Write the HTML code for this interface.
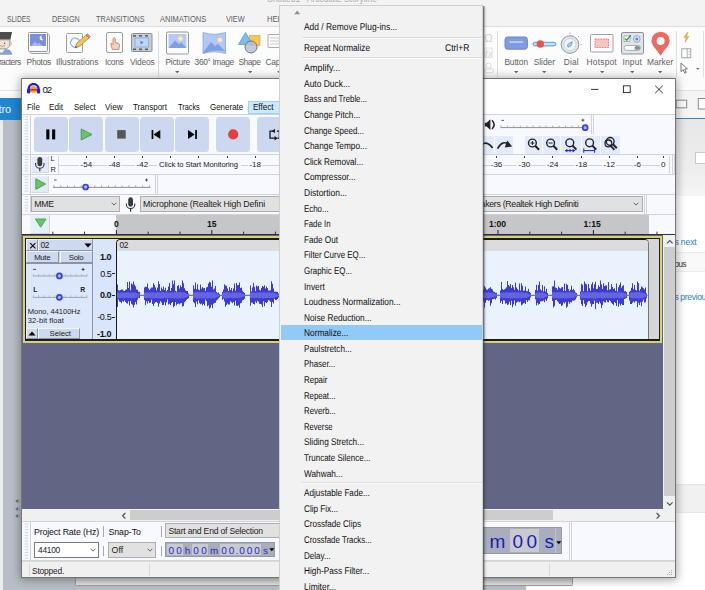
<!DOCTYPE html>
<html><head><meta charset="utf-8"><title>Audacity - Effect menu</title>
<style>
html,body{margin:0;padding:0;background:#fff;}
#root{position:relative;width:705px;height:590px;overflow:hidden;background:#fff;font-family:"Liberation Sans",sans-serif;}
#root div,#root span.t,#root svg{position:absolute;}
#root div{box-sizing:border-box;}
span.t{white-space:nowrap;line-height:12px;display:block;}
</style></head><body><div id="root">
<div style="left:0.00px;top:0.00px;width:705.00px;height:26.00px;background:#f3f3f4;"></div>
<div style="left:0.00px;top:26.00px;width:705.00px;height:65.00px;background:#fcfcfc;border-top:1px solid #dcdcdc;border-bottom:1px solid #e2e2e2;"></div>
<span class="t " style="left:267.00px;top:-7.10px;font-size:9.2px;color:#adadad;transform:scaleX(0.9110);transform-origin:0 50%;">Untitled1  -  Articulate Storyline</span>
<span class="t " style="left:7.40px;top:13.10px;font-size:9.4px;color:#5e5e5e;transform:scaleX(0.7058);transform-origin:0 50%;">SLIDES</span>
<span class="t " style="left:51.60px;top:13.10px;font-size:9.4px;color:#5e5e5e;transform:scaleX(0.7714);transform-origin:0 50%;">DESIGN</span>
<span class="t " style="left:96.00px;top:13.10px;font-size:9.4px;color:#5e5e5e;transform:scaleX(0.7722);transform-origin:0 50%;">TRANSITIONS</span>
<span class="t " style="left:160.00px;top:13.10px;font-size:9.4px;color:#5e5e5e;transform:scaleX(0.8028);transform-origin:0 50%;">ANIMATIONS</span>
<span class="t " style="left:226.00px;top:13.10px;font-size:9.4px;color:#5e5e5e;transform:scaleX(0.7742);transform-origin:0 50%;">VIEW</span>
<span class="t " style="left:266.60px;top:13.10px;font-size:9.4px;color:#5e5e5e;transform:scaleX(0.8104);transform-origin:0 50%;">HELP</span>
<span class="t " style="left:-14.78px;top:55.70px;font-size:8.4px;color:#606060;letter-spacing:-0.570px;">Characters</span>
<span class="t " style="left:26.60px;top:55.70px;font-size:8.4px;color:#606060;letter-spacing:-0.292px;">Photos</span>
<span class="t " style="left:56.00px;top:55.70px;font-size:8.4px;color:#606060;letter-spacing:0.009px;">Illustrations</span>
<span class="t " style="left:105.00px;top:55.70px;font-size:8.4px;color:#606060;letter-spacing:-0.335px;">Icons</span>
<span class="t " style="left:130.00px;top:55.70px;font-size:8.4px;color:#606060;letter-spacing:-0.156px;">Videos</span>
<span class="t " style="left:165.40px;top:55.70px;font-size:8.4px;color:#606060;letter-spacing:-0.221px;">Picture</span>
<span class="t " style="left:194.60px;top:55.70px;font-size:8.4px;color:#606060;letter-spacing:-0.366px;">360° Image</span>
<span class="t " style="left:238.40px;top:55.70px;font-size:8.4px;color:#606060;letter-spacing:-0.418px;">Shape</span>
<span class="t " style="left:265.40px;top:55.70px;font-size:8.4px;color:#606060;letter-spacing:-0.193px;">Caption</span>
<span class="t " style="left:504.40px;top:55.70px;font-size:8.4px;color:#606060;letter-spacing:-0.114px;">Button</span>
<span class="t " style="left:533.70px;top:55.70px;font-size:8.4px;color:#606060;letter-spacing:-0.030px;">Slider</span>
<span class="t " style="left:563.70px;top:55.70px;font-size:8.4px;color:#606060;letter-spacing:0.157px;">Dial</span>
<span class="t " style="left:586.60px;top:55.70px;font-size:8.4px;color:#606060;letter-spacing:0.207px;">Hotspot</span>
<span class="t " style="left:622.50px;top:55.70px;font-size:8.4px;color:#606060;letter-spacing:0.163px;">Input</span>
<span class="t " style="left:647.00px;top:55.70px;font-size:8.4px;color:#606060;letter-spacing:0.044px;">Marker</span>
<div style="left:158.10px;top:31.00px;width:1.00px;height:46.00px;background:#dedede;"></div>
<div style="left:496.50px;top:31.00px;width:1.00px;height:46.00px;background:#dedede;"></div>
<div style="left:676.10px;top:31.00px;width:1.00px;height:46.00px;background:#dedede;"></div>
<div style="left:702.90px;top:31.00px;width:1.00px;height:46.00px;background:#dedede;"></div>
<svg style="left:175.20px;top:71.30px;" width="4.4" height="2.6" viewBox="0 0 4.4 2.6"><path d="M0 0 L4.4 0 L2.2 2.2 Z" fill="#666"/></svg>
<svg style="left:247.80px;top:71.30px;" width="4.4" height="2.6" viewBox="0 0 4.4 2.6"><path d="M0 0 L4.4 0 L2.2 2.2 Z" fill="#666"/></svg>
<svg style="left:276.80px;top:71.30px;" width="4.4" height="2.6" viewBox="0 0 4.4 2.6"><path d="M0 0 L4.4 0 L2.2 2.2 Z" fill="#666"/></svg>
<svg style="left:514.20px;top:71.30px;" width="4.4" height="2.6" viewBox="0 0 4.4 2.6"><path d="M0 0 L4.4 0 L2.2 2.2 Z" fill="#666"/></svg>
<svg style="left:542.30px;top:71.30px;" width="4.4" height="2.6" viewBox="0 0 4.4 2.6"><path d="M0 0 L4.4 0 L2.2 2.2 Z" fill="#666"/></svg>
<svg style="left:567.80px;top:71.30px;" width="4.4" height="2.6" viewBox="0 0 4.4 2.6"><path d="M0 0 L4.4 0 L2.2 2.2 Z" fill="#666"/></svg>
<svg style="left:599.80px;top:71.30px;" width="4.4" height="2.6" viewBox="0 0 4.4 2.6"><path d="M0 0 L4.4 0 L2.2 2.2 Z" fill="#666"/></svg>
<svg style="left:629.80px;top:71.30px;" width="4.4" height="2.6" viewBox="0 0 4.4 2.6"><path d="M0 0 L4.4 0 L2.2 2.2 Z" fill="#666"/></svg>
<svg style="left:658.40px;top:71.30px;" width="4.4" height="2.6" viewBox="0 0 4.4 2.6"><path d="M0 0 L4.4 0 L2.2 2.2 Z" fill="#666"/></svg>
<svg style="left:696.20px;top:68.10px;" width="3.6" height="2.2" viewBox="0 0 3.6 2.2"><path d="M0 0 L3.6 0 L1.8 1.8 Z" fill="#666"/></svg>
<svg style="left:0.00px;top:31.00px;" width="14" height="24" viewBox="0 0 14 24"><path d="M-6 1 L12 1 L10.4 8.8 L-6 8.8Z" fill="#4c4c4c"/><path d="M-6 8.8 H9.8 V13.4 Q9.8 17.8 4 17.8 H-6Z" fill="#f6e0d2" stroke="#8e8e8e" stroke-width="0.8"/><circle cx="4.6" cy="12.2" r="0.7" fill="#555"/><path d="M0 14.6 Q2.4 16.2 5 14.6" stroke="#9a7a6a" fill="none" stroke-width="0.7"/><ellipse cx="10.4" cy="12.6" rx="1" ry="1.5" fill="#f6e0d2" stroke="#8e8e8e" stroke-width="0.6"/><path d="M-6 18.6 H6 Q11.4 18.8 11.8 23.4 H-6Z" fill="#7fa3dc" stroke="#6a8cc8" stroke-width="0.6"/><path d="M-3 18.4 L1.4 22 L5 18.4Z" fill="#fdfdfd"/><path d="M-6 23.3H12" stroke="#a9b2bd" stroke-width="1.2"/></svg>
<svg style="left:27.00px;top:31.00px;" width="24" height="24" viewBox="0 0 24 24"><rect x="3.5" y="3.5" width="19" height="19" rx="1" fill="#f7f7f7" stroke="#9aa0a8" stroke-width="1"/><rect x="1.5" y="1.5" width="19" height="19" rx="1" fill="#fafafa" stroke="#8e959e" stroke-width="1"/><rect x="3" y="3" width="16" height="12" fill="#7a90dc"/><path d="M14.8 4.6 A2.4 2.4 0 1 0 16.6 8.8 A2.9 2.9 0 0 1 14.8 4.6Z" fill="#fdf2b8"/><path d="M4 15 L8 10.4 L10.4 13 L12 11.8 L15.4 15Z" fill="#a9b8ee"/></svg>
<svg style="left:65.00px;top:31.00px;" width="26" height="24" viewBox="0 0 26 24"><rect x="1.5" y="2.5" width="16" height="19" rx="1" fill="#fbfbfb" stroke="#9aa0a8" stroke-width="1"/><path d="M6 10 Q8 5 12 8 Q15 7 14 11 Q16 14 12 15 Q9 18 7 15 Q4 13 6 10Z" fill="#f4f7fe" stroke="#6f8fe0" stroke-width="0.9"/><path d="M10 17 L12 12 L21 4 L24 7 L15 15 Z" fill="#f6c453" stroke="#a08040" stroke-width="0.8"/><path d="M21 4 L22.5 2.7 L25.3 5.6 L24 7Z" fill="#e88a9a" stroke="#a06070" stroke-width="0.6"/><path d="M10 17 L10.8 14.8 L12.3 16.2Z" fill="#555"/></svg>
<svg style="left:105.00px;top:31.00px;" width="20" height="24" viewBox="0 0 20 24"><rect x="1.5" y="1.5" width="16" height="20" rx="1.5" fill="#fbfbfb" stroke="#9aa0a8" stroke-width="1"/><path d="M7.5 18.5 L6 14 Q5 12 7 12.5 L8 13.5 L8 7.5 Q9.2 6 10.3 7.5 L10.3 11.5 L13.5 12.3 Q15 13 14.5 15 L13.8 18.5Z" fill="#f6d0bc" stroke="#b08070" stroke-width="0.8"/></svg>
<svg style="left:130.00px;top:32.00px;" width="24" height="22" viewBox="0 0 24 22"><rect x="1.5" y="1.5" width="20.5" height="18" rx="1" fill="#c9ccd2" stroke="#8a9098" stroke-width="1"/><rect x="5" y="6" width="13.5" height="9" fill="#bcd6f6" stroke="#7fa6dc" stroke-width="0.8"/><path d="M10.5 8.6 L13.6 10.5 L10.5 12.4Z" fill="#5c86d0"/><g fill="#5a5f68"><rect x="3" y="3" width="3" height="1.6"/><rect x="9" y="3" width="3" height="1.6"/><rect x="15" y="3" width="3" height="1.6"/><rect x="3" y="16.5" width="3" height="1.6"/><rect x="9" y="16.5" width="3" height="1.6"/><rect x="15" y="16.5" width="3" height="1.6"/></g></svg>
<svg style="left:165.00px;top:31.00px;" width="26" height="24" viewBox="0 0 26 24"><rect x="1.5" y="1" width="22" height="22" rx="1.5" fill="#fbfbfb" stroke="#8e959e" stroke-width="1"/><rect x="3.5" y="3" width="18" height="14" fill="#b4ccf5"/><circle cx="15.5" cy="7.5" r="2.6" fill="#fde9d2" stroke="#f0b890" stroke-width="0.6"/><path d="M3.5 17 L10 9.5 L14 13 L16.5 11.5 L21.5 17Z" fill="#7f9fe4"/></svg>
<svg style="left:202.00px;top:31.00px;" width="25" height="24" viewBox="0 0 25 24"><path d="M1 1.5 Q12 5 23.5 1.5 L23.5 22.5 Q12 19 1 22.5Z" fill="#b0c9f4" stroke="#86a4e2" stroke-width="0.8"/><circle cx="18" cy="9" r="2.6" fill="#fde9d2" stroke="#f0b890" stroke-width="0.6"/><path d="M1 21.5 L9 11 L13 15 L16 13 L23.5 20.5 Q12 18 1 22.5Z" fill="#7f9fe4"/></svg>
<svg style="left:237.00px;top:31.00px;" width="26" height="24" viewBox="0 0 26 24"><rect x="12.5" y="4.5" width="10.5" height="10" fill="#f6c64e" stroke="#c8a040" stroke-width="0.6"/><path d="M1.5 13.5 L8.5 1.5 L15.5 13.5Z" fill="#7fbdea" stroke="#5a98cc" stroke-width="0.8"/><circle cx="14" cy="16" r="6" fill="#b8c0d0" fill-opacity="0.85" stroke="#6a7488" stroke-width="1"/></svg>
<svg style="left:267.00px;top:33.00px;" width="18" height="18" viewBox="0 0 18 18"><rect x="1" y="1.5" width="20" height="13" rx="1" fill="#fdfdfd" stroke="#a8a8a8" stroke-width="1"/><path d="M3 5H20M3 8H20M3 11H20" stroke="#c8c8c8" stroke-width="1"/></svg>
<span class="t " style="left:484.30px;top:31.60px;font-size:11.5px;color:#d2d2d2;">Ω</span>
<span class="t " style="left:485.31px;top:48.00px;font-size:9.5px;color:#d6d6d6;font-style:italic;">fx</span>
<svg style="left:484.00px;top:47.00px;" width="10" height="12" viewBox="0 0 10 12"><rect x="1" y="1" width="7" height="9.6" fill="none" stroke="#dcdcdc" stroke-width="0.8"/></svg>
<svg style="left:484.00px;top:62.00px;" width="11" height="12" viewBox="0 0 11 12"><circle cx="4.6" cy="3.6" r="2.6" fill="none" stroke="#d4d4d4" stroke-width="0.9"/><rect x="0.8" y="7" width="8.6" height="3.6" rx="1.6" fill="none" stroke="#d4d4d4" stroke-width="0.9"/></svg>
<svg style="left:503.00px;top:35.00px;" width="27" height="16" viewBox="0 0 27 16"><rect x="2" y="2" width="22.4" height="12.2" rx="2.5" fill="#7f9cdd" stroke="#6a86cc" stroke-width="1"/><rect x="6.2" y="6.1" width="14" height="1.9" rx="0.9" fill="#b6c8ef"/></svg>
<svg style="left:532.00px;top:38.00px;" width="26" height="12" viewBox="0 0 26 12"><rect x="1" y="4.3" width="23" height="3.6" rx="1.8" fill="#bfe0f8" stroke="#4f9fdc" stroke-width="1"/><circle cx="8.3" cy="6" r="3.7" fill="#e9524a"/></svg>
<svg style="left:558.00px;top:31.00px;" width="24" height="26" viewBox="0 0 24 26"><circle cx="12" cy="13.5" r="8.8" fill="#e3e7ea" stroke="#8c949c" stroke-width="1"/><circle cx="12" cy="13.5" r="6" fill="#f2f5f7" stroke="#b4bcc4" stroke-width="0.6"/><path d="M9.8 16 Q8.6 12.5 14.2 10.8 Q13.6 16.5 9.8 16Z" fill="#9fd0f4" stroke="#4f97d0" stroke-width="0.8"/><g fill="#888"><circle cx="12" cy="2.2" r="0.6"/><circle cx="20.5" cy="5.5" r="0.6"/><circle cx="23" cy="13.5" r="0.6"/></g></svg>
<svg style="left:589.00px;top:33.00px;" width="26" height="21" viewBox="0 0 26 21"><rect x="1.5" y="1.5" width="22.5" height="17.5" rx="1" fill="#fbfbfb" stroke="#9aa0a8" stroke-width="1"/><rect x="6" y="6" width="13.5" height="8.5" fill="#f9c4c0" stroke="#ea6a62" stroke-width="0.9" stroke-dasharray="1.6 1.1"/></svg>
<svg style="left:620.00px;top:31.00px;" width="25" height="25" viewBox="0 0 25 25"><rect x="1.5" y="1.5" width="22" height="21.5" rx="1.5" fill="#e2e5e8" stroke="#8a9098" stroke-width="1"/><rect x="4" y="5" width="6" height="5.5" fill="#fff" stroke="#8a9098" stroke-width="0.7"/><path d="M5 7.5 L6.8 9.3 L10.8 4.2" stroke="#3aa04a" stroke-width="1.4" fill="none"/><circle cx="16.8" cy="8" r="3.3" fill="#dfe9fa" stroke="#7a90c0" stroke-width="0.8"/><circle cx="16.8" cy="8" r="1.5" fill="#5c86d8"/><rect x="4" y="14.5" width="16.5" height="4.8" rx="2.4" fill="#fff" stroke="#8a9098" stroke-width="0.7"/><rect x="14.5" y="15" width="5.6" height="3.8" rx="1.9" fill="#8a9098"/></svg>
<svg style="left:650.00px;top:31.00px;" width="22" height="26" viewBox="0 0 22 26"><path d="M10.6 24.8 C6 17.5 1.5 14.6 1.5 9.8 A9.1 9.1 0 0 1 19.7 9.8 C19.7 14.6 15.2 17.5 10.6 24.8Z" fill="#ee6a60"/><circle cx="10.6" cy="10" r="4" fill="#fcfcfc"/></svg>
<svg style="left:682.00px;top:32.00px;" width="9" height="11" viewBox="0 0 9 11"><path d="M5.2 0.5 L1.8 5.6 L4.2 5.6 L3 10.3 L7 4.4 L4.6 4.4 L6 0.5Z" fill="#f0b840" stroke="#b89030" stroke-width="0.4"/></svg>
<svg style="left:680.50px;top:48.00px;" width="11" height="11" viewBox="0 0 11 11"><rect x="0.8" y="0.8" width="9" height="9" fill="#fdfdfd" stroke="#909090" stroke-width="0.8"/><path d="M6.2 0.8V9.8" stroke="#909090" stroke-width="0.7"/><path d="M8 3.5v0.8M8 6v0.8" stroke="#707070" stroke-width="0.8"/></svg>
<svg style="left:680.00px;top:62.00px;" width="9" height="13" viewBox="0 0 9 13"><path d="M1 1 L1 9.6 L3.2 7.6 L4.8 11.2 L6.3 10.5 L4.7 7 L7.4 6.9Z" fill="#fff" stroke="#555" stroke-width="0.8"/></svg>
<div style="left:0.00px;top:91.00px;width:22.00px;height:7.00px;background:linear-gradient(#fdfdfd,#f4f5f6);"></div>
<div style="left:0.00px;top:97.60px;width:22.00px;height:22.00px;background:#1f86d4;"></div>
<span class="t " style="left:-1.50px;top:102.60px;font-size:11px;color:#eaf4fc;letter-spacing:-0.112px;">tro</span>
<div style="left:0.00px;top:119.50px;width:22.00px;height:471.00px;background:#b7bec5;"></div>
<div style="left:0.00px;top:119.50px;width:3.00px;height:471.00px;background:#eceef0;"></div>
<svg style="left:15.20px;top:499.40px;" width="6" height="4" viewBox="0 0 6 4"><path d="M0.2 2 L3.2 0.1 L3.2 3.9Z" fill="#6c7076"/><path d="M4.3 0.7v0.8M4.3 2.5v0.8" stroke="#5f9ad0" stroke-width="0.9"/></svg>
<svg style="left:15.20px;top:506.60px;" width="6" height="4" viewBox="0 0 6 4"><path d="M0.2 2 L3.2 0.1 L3.2 3.9Z" fill="#6c7076"/><path d="M4.3 0.7v0.8M4.3 2.5v0.8" stroke="#5f9ad0" stroke-width="0.9"/></svg>
<svg style="left:15.20px;top:514.00px;" width="6" height="4" viewBox="0 0 6 4"><path d="M0.2 2 L3.2 0.1 L3.2 3.9Z" fill="#6c7076"/><path d="M4.3 0.7v0.8M4.3 2.5v0.8" stroke="#5f9ad0" stroke-width="0.9"/></svg>
<div style="left:676.00px;top:91.00px;width:29.00px;height:27.50px;background:#f5f5f5;"></div>
<svg style="left:675.00px;top:97.00px;" width="30" height="14" viewBox="0 0 30 14"><rect x="1.2" y="3.2" width="10.5" height="7.6" fill="#fbfbfb" stroke="#8c8c8c" stroke-width="1"/><rect x="23.3" y="1.5" width="10" height="10.5" fill="#fdfdfd" stroke="#8c8c8c" stroke-width="1"/></svg>
<div style="left:676.00px;top:117.80px;width:29.00px;height:1.60px;background:#2b88cf;"></div>
<div style="left:676.00px;top:119.40px;width:29.00px;height:77.00px;background:linear-gradient(#e7e7e7,#eeeeee 70%,#f6f6f6);"></div>
<div style="left:676.00px;top:176.50px;width:29.00px;height:1.00px;background:#f3f3f3;"></div>
<div style="left:695.30px;top:151.70px;width:12.00px;height:12.00px;background:#fff;border:1px solid #c9c9c9;"></div>
<div style="left:676.00px;top:196.00px;width:29.00px;height:394.00px;background:#fff;"></div>
<div style="left:676.00px;top:252.00px;width:29.00px;height:1.00px;background:#ececec;"></div>
<div style="left:676.00px;top:271.00px;width:29.00px;height:1.00px;background:#ececec;"></div>
<div style="left:676.00px;top:253.00px;width:29.00px;height:18.00px;background:#f9f9f9;"></div>
<span class="t " style="left:674.40px;top:236.20px;font-size:8.6px;color:#2d7fb4;letter-spacing:-0.124px;">s next</span>
<span class="t " style="left:674.20px;top:257.60px;font-size:8.6px;color:#3a3a3a;letter-spacing:-0.755px;">ous</span>
<span class="t " style="left:674.40px;top:291.40px;font-size:8.6px;color:#2d7fb4;letter-spacing:-0.360px;">s previous</span>
<div style="left:676.00px;top:484.00px;width:29.00px;height:29.00px;background:#f1f1f1;border-top:1px solid #e4e8ec;border-bottom:1px solid #e8e8e8;"></div>
<div style="left:22.00px;top:578.00px;width:504.00px;height:12.00px;background:#b7bec5;"></div>
<div style="left:75.00px;top:576.00px;width:498.40px;height:10.40px;background:linear-gradient(#bdbdbd,#d4d4d4 50%,#e6e6e6);border:1px solid #9c9c9c;border-top:none;border-radius:0 0 2px 2px;"></div>
<div style="left:20.90px;top:78.20px;width:654.90px;height:499.70px;background:#ffffff;border:1px solid #747474;box-shadow:0 1px 9px 1px rgba(0,0,0,0.34);"></div>
<svg style="left:26.50px;top:83.00px;" width="14" height="11" viewBox="0 0 14 11"><path d="M1.6 8.2 V6.4 A5 5.4 0 0 1 11.6 6.4 V8.2" fill="none" stroke="#1d1dd8" stroke-width="2.3"/><ellipse cx="6.6" cy="6.4" rx="3.6" ry="3.4" fill="#f6a21e"/><rect x="3.6" y="6" width="6" height="1.5" fill="#e02818"/><rect x="0" y="5.6" width="3.4" height="5" rx="1.5" fill="#1d1dd8"/><rect x="9.8" y="5.6" width="3.4" height="5" rx="1.5" fill="#1d1dd8"/></svg>
<span class="t " style="left:42.50px;top:83.60px;font-size:9.7px;color:#111;letter-spacing:-1.045px;">02</span>
<svg style="left:588.00px;top:83.00px;" width="80" height="13" viewBox="0 0 80 13"><path d="M3 6.4H10.6" stroke="#222" stroke-width="0.9"/><rect x="35.4" y="2.8" width="6.8" height="6.8" fill="none" stroke="#222" stroke-width="0.9"/><path d="M67.2 2.6 L74.8 10.2 M74.8 2.6 L67.2 10.2" stroke="#222" stroke-width="0.9"/></svg>
<div style="left:248.40px;top:101.00px;width:36.00px;height:12.80px;background:#cce8ff;border:1px solid #99d1ff;"></div>
<span class="t " style="left:26.80px;top:101.35px;font-size:9.0px;color:#111;transform:scaleX(0.8826);transform-origin:0 50%;">File</span>
<span class="t " style="left:49.30px;top:101.35px;font-size:9.0px;color:#111;transform:scaleX(0.9027);transform-origin:0 50%;">Edit</span>
<span class="t " style="left:73.50px;top:101.35px;font-size:9.0px;color:#111;transform:scaleX(0.8675);transform-origin:0 50%;">Select</span>
<span class="t " style="left:105.40px;top:101.35px;font-size:9.0px;color:#111;transform:scaleX(0.9098);transform-origin:0 50%;">View</span>
<span class="t " style="left:133.30px;top:101.35px;font-size:9.0px;color:#111;transform:scaleX(0.8905);transform-origin:0 50%;">Transport</span>
<span class="t " style="left:178.00px;top:101.35px;font-size:9.0px;color:#111;transform:scaleX(0.8175);transform-origin:0 50%;">Tracks</span>
<span class="t " style="left:210.00px;top:101.35px;font-size:9.0px;color:#111;transform:scaleX(0.8847);transform-origin:0 50%;">Generate</span>
<span class="t " style="left:253.40px;top:101.35px;font-size:9.0px;color:#111;transform:scaleX(0.8929);transform-origin:0 50%;">Effect</span>
<div style="left:21.90px;top:114.00px;width:652.80px;height:120.00px;background:#f8f9fe;"></div>
<div style="left:21.90px;top:113.70px;width:652.80px;height:1.00px;background:#d0d3d8;"></div>
<div style="left:21.90px;top:153.70px;width:652.80px;height:1.00px;background:#d0d3d8;"></div>
<div style="left:21.90px;top:173.80px;width:652.80px;height:1.00px;background:#d0d3d8;"></div>
<div style="left:21.90px;top:193.70px;width:652.80px;height:1.00px;background:#d0d3d8;"></div>
<div style="left:21.90px;top:213.50px;width:652.80px;height:1.00px;background:#d0d3d8;"></div>
<svg style="left:23.00px;top:0.00px;" width="7" height="590" viewBox="0 0 7 590"><path d="M1.8 116.7H5.2" stroke="#c2c4ca" stroke-width="0.7"/><path d="M1.8 119.5H5.2" stroke="#c2c4ca" stroke-width="0.7"/><path d="M1.8 122.4H5.2" stroke="#c2c4ca" stroke-width="0.7"/><path d="M1.8 125.2H5.2" stroke="#c2c4ca" stroke-width="0.7"/><path d="M1.8 128.1H5.2" stroke="#c2c4ca" stroke-width="0.7"/><path d="M1.8 130.9H5.2" stroke="#c2c4ca" stroke-width="0.7"/><path d="M1.8 133.8H5.2" stroke="#c2c4ca" stroke-width="0.7"/><path d="M1.8 136.7H5.2" stroke="#c2c4ca" stroke-width="0.7"/><path d="M1.8 139.5H5.2" stroke="#c2c4ca" stroke-width="0.7"/><path d="M1.8 142.3H5.2" stroke="#c2c4ca" stroke-width="0.7"/><path d="M1.8 145.2H5.2" stroke="#c2c4ca" stroke-width="0.7"/><path d="M1.8 148.1H5.2" stroke="#c2c4ca" stroke-width="0.7"/><path d="M1.8 150.9H5.2" stroke="#c2c4ca" stroke-width="0.7"/></svg>
<div style="left:29.70px;top:114.70px;width:1.00px;height:39.00px;background:#d0d3d8;"></div>
<svg style="left:23.00px;top:0.00px;" width="7" height="590" viewBox="0 0 7 590"><path d="M1.8 156.7H5.2" stroke="#c2c4ca" stroke-width="0.7"/><path d="M1.8 159.5H5.2" stroke="#c2c4ca" stroke-width="0.7"/><path d="M1.8 162.4H5.2" stroke="#c2c4ca" stroke-width="0.7"/><path d="M1.8 165.2H5.2" stroke="#c2c4ca" stroke-width="0.7"/><path d="M1.8 168.1H5.2" stroke="#c2c4ca" stroke-width="0.7"/><path d="M1.8 170.9H5.2" stroke="#c2c4ca" stroke-width="0.7"/></svg>
<div style="left:29.70px;top:154.70px;width:1.00px;height:19.10px;background:#d0d3d8;"></div>
<svg style="left:23.00px;top:0.00px;" width="7" height="590" viewBox="0 0 7 590"><path d="M1.8 176.8H5.2" stroke="#c2c4ca" stroke-width="0.7"/><path d="M1.8 179.7H5.2" stroke="#c2c4ca" stroke-width="0.7"/><path d="M1.8 182.5H5.2" stroke="#c2c4ca" stroke-width="0.7"/><path d="M1.8 185.4H5.2" stroke="#c2c4ca" stroke-width="0.7"/><path d="M1.8 188.2H5.2" stroke="#c2c4ca" stroke-width="0.7"/><path d="M1.8 191.1H5.2" stroke="#c2c4ca" stroke-width="0.7"/></svg>
<div style="left:29.70px;top:174.80px;width:1.00px;height:18.90px;background:#d0d3d8;"></div>
<svg style="left:23.00px;top:0.00px;" width="7" height="590" viewBox="0 0 7 590"><path d="M1.8 196.7H5.2" stroke="#c2c4ca" stroke-width="0.7"/><path d="M1.8 199.5H5.2" stroke="#c2c4ca" stroke-width="0.7"/><path d="M1.8 202.4H5.2" stroke="#c2c4ca" stroke-width="0.7"/><path d="M1.8 205.2H5.2" stroke="#c2c4ca" stroke-width="0.7"/><path d="M1.8 208.1H5.2" stroke="#c2c4ca" stroke-width="0.7"/><path d="M1.8 210.9H5.2" stroke="#c2c4ca" stroke-width="0.7"/></svg>
<div style="left:29.70px;top:194.70px;width:1.00px;height:18.80px;background:#d0d3d8;"></div>
<div style="left:33.90px;top:117.10px;width:34.10px;height:34.50px;background:#cdd8f0;border-radius:3.5px;"></div>
<div style="left:69.20px;top:117.10px;width:34.10px;height:34.50px;background:#cdd8f0;border-radius:3.5px;"></div>
<div style="left:104.60px;top:117.10px;width:34.10px;height:34.50px;background:#cdd8f0;border-radius:3.5px;"></div>
<div style="left:140.00px;top:117.10px;width:34.10px;height:34.50px;background:#cdd8f0;border-radius:3.5px;"></div>
<div style="left:175.40px;top:117.10px;width:34.10px;height:34.50px;background:#cdd8f0;border-radius:3.5px;"></div>
<div style="left:216.40px;top:117.10px;width:34.10px;height:34.50px;background:#cdd8f0;border-radius:3.5px;"></div>
<div style="left:257.20px;top:117.10px;width:34.10px;height:34.50px;background:#cdd8f0;border-radius:3.5px;"></div>
<svg style="left:0.00px;top:0.00px;" width="705" height="590" viewBox="0 0 705 590"><rect x="46.3" y="129.4" width="3.1" height="10" fill="#000"/><rect x="52.1" y="129.4" width="3.1" height="10" fill="#000"/><path d="M81.2 129 L92 134.5 L81.2 140 Z" fill="#6ec06e" stroke="#3f9a3f" stroke-width="0.9" stroke-linejoin="round"/><rect x="117.2" y="130.1" width="8.5" height="8.5" fill="#555"/><rect x="151.6" y="130" width="1.7" height="9" fill="#000"/><path d="M160.3 130 L153.6 134.5 L160.3 139Z" fill="#000"/><path d="M188 130 L194.7 134.5 L188 139Z" fill="#000"/><rect x="195.2" y="130" width="1.7" height="9" fill="#000"/><circle cx="233.2" cy="134.4" r="5.1" fill="#e2403c"/><path d="M274.4 131 H270 V138.2 H275.4 M277 131 H279.4 V138.2 H277.6" fill="none" stroke="#111" stroke-width="1.25"/><path d="M274.9 128.8 L271.9 131 L274.9 133.2Z" fill="#111"/><path d="M274.6 136 L277.6 138.2 L274.6 140.4Z" fill="#111"/></svg>
<svg style="left:484.00px;top:114.00px;" width="110" height="21" viewBox="0 0 110 21"><path d="M0.8 8.8 H2.6 L6.4 5.2 V16 L2.6 12.4 H0.8Z" fill="#222"/><path d="M8 6.2 Q12.2 10.6 8 15" stroke="#222" stroke-width="1.5" fill="none"/><path d="M17.4 6.4H20" stroke="#333" stroke-width="0.8"/><path d="M97.4 6.2H100.4M98.9 4.7V7.7" stroke="#333" stroke-width="0.8"/><path d="M16.6 13.6H101" stroke="#909090" stroke-width="1"/><path d="M17.0 11.6V13.6" stroke="#9a9a9a" stroke-width="0.8"/><path d="M23.4 11.6V13.6" stroke="#9a9a9a" stroke-width="0.8"/><path d="M29.9 11.6V13.6" stroke="#9a9a9a" stroke-width="0.8"/><path d="M36.4 11.6V13.6" stroke="#9a9a9a" stroke-width="0.8"/><path d="M42.8 11.6V13.6" stroke="#9a9a9a" stroke-width="0.8"/><path d="M49.2 11.6V13.6" stroke="#9a9a9a" stroke-width="0.8"/><path d="M55.7 11.6V13.6" stroke="#9a9a9a" stroke-width="0.8"/><path d="M62.1 11.6V13.6" stroke="#9a9a9a" stroke-width="0.8"/><path d="M68.6 11.6V13.6" stroke="#9a9a9a" stroke-width="0.8"/><path d="M75.1 11.6V13.6" stroke="#9a9a9a" stroke-width="0.8"/><path d="M81.5 11.6V13.6" stroke="#9a9a9a" stroke-width="0.8"/><path d="M88.0 11.6V13.6" stroke="#9a9a9a" stroke-width="0.8"/><path d="M94.4 11.6V13.6" stroke="#9a9a9a" stroke-width="0.8"/><path d="M100.9 11.6V13.6" stroke="#9a9a9a" stroke-width="0.8"/><circle cx="101.2" cy="13.7" r="2.5" fill="#aab4f6" stroke="#3640e6" stroke-width="1.7"/></svg>
<div style="left:590.60px;top:114.70px;width:1.00px;height:19.20px;background:#d0d3d8;"></div>
<div style="left:593.00px;top:114.70px;width:1.00px;height:19.20px;background:#d0d3d8;"></div>
<div style="left:470.00px;top:136.00px;width:24.00px;height:17.60px;background:#e3ebfb;"></div>
<div style="left:494.80px;top:136.00px;width:18.50px;height:17.60px;background:#e3ebfb;"></div>
<div style="left:524.80px;top:136.00px;width:17.20px;height:17.60px;background:#e3ebfb;"></div>
<div style="left:542.60px;top:136.00px;width:17.80px;height:17.60px;background:#e3ebfb;"></div>
<div style="left:561.00px;top:136.00px;width:20.00px;height:17.60px;background:#e3ebfb;"></div>
<div style="left:582.40px;top:136.00px;width:17.20px;height:17.60px;background:#e3ebfb;"></div>
<div style="left:601.00px;top:136.00px;width:18.60px;height:17.60px;background:#e3ebfb;"></div>
<svg style="left:0.00px;top:0.00px;" width="705" height="590" viewBox="0 0 705 590"><path d="M478 150 Q484 137.5 492.6 148" stroke="#222" stroke-width="1.7" fill="none"/><path d="M497.6 148.6 Q502.6 139.6 509 144.4" stroke="#222" stroke-width="1.7" fill="none"/><path d="M507.2 140.6 L512.2 146.4 L504.8 147.6Z" fill="#222"/><circle cx="532.4" cy="143" r="3.9" fill="none" stroke="#222" stroke-width="1.4"/><path d="M535.1999999999999 145.8 L539.0 149.8" stroke="#222" stroke-width="2"/><path d="M530.4 143H534.4M532.4 141V145" stroke="#222" stroke-width="1"/><circle cx="550.6" cy="143" r="3.9" fill="none" stroke="#222" stroke-width="1.4"/><path d="M553.4 145.8 L557.2 149.8" stroke="#222" stroke-width="2"/><path d="M548.6 143H552.6" stroke="#222" stroke-width="1"/><circle cx="569.8" cy="142.8" r="3.9" fill="none" stroke="#222" stroke-width="1.4"/><path d="M572.5999999999999 145.60000000000002 L576.4 149.60000000000002" stroke="#222" stroke-width="2"/><path d="M565 150.6H575" stroke="#2222dd" stroke-width="1"/><path d="M565 150.6l2.4-1.8v3.6zM575 150.6l-2.4-1.8v3.6z" fill="#2222dd"/><path d="M570 149v3.2" stroke="#2222dd" stroke-width="1"/><circle cx="589.6" cy="142.8" r="3.9" fill="none" stroke="#222" stroke-width="1.4"/><path d="M592.4 145.60000000000002 L596.2 149.60000000000002" stroke="#222" stroke-width="2"/><path d="M583.8 150.6H594.6M583.8 148.4V152.8M594.6 148.4V152.8" stroke="#2222dd" stroke-width="1"/><circle cx="608.4" cy="143.4" r="3.4" fill="none" stroke="#222" stroke-width="1.3"/><path d="M610.8 145.8 L614.4 149.8" stroke="#222" stroke-width="1.8"/><circle cx="610.2" cy="141.4" r="3.9" fill="none" stroke="#222" stroke-width="1.4"/><path d="M613.0 144.20000000000002 L616.8000000000001 148.20000000000002" stroke="#222" stroke-width="2"/></svg>
<div style="left:31.00px;top:156.00px;width:18.00px;height:17.00px;background:#e3ebfb;border:1px solid #eef2fc;border-right-color:#d4d9e6;border-bottom-color:#d4d9e6;"></div>
<svg style="left:0.00px;top:0.00px;" width="705" height="590" viewBox="0 0 705 590"><rect x="37.41" y="156.96" width="4.79" height="9.35" rx="2.39" fill="#3a3a3a"/><path d="M35.58 163.12 V164.14 A4.22 4.10 0 0 0 44.02 164.14 V163.12" fill="none" stroke="#3a3a3a" stroke-width="1.14"/><path d="M39.80 168.25 V171.32" stroke="#3a3a3a" stroke-width="1.25"/><rect x="128.21" y="197.36" width="4.79" height="9.35" rx="2.39" fill="#3a3a3a"/><path d="M126.38 203.52 V204.54 A4.22 4.10 0 0 0 134.82 204.54 V203.52" fill="none" stroke="#3a3a3a" stroke-width="1.14"/><path d="M130.60 208.65 V211.72" stroke="#3a3a3a" stroke-width="1.25"/></svg>
<span class="t " style="left:50.60px;top:153.40px;font-size:7.4px;color:#222;">L</span>
<span class="t " style="left:50.60px;top:163.60px;font-size:7.4px;color:#222;">R</span>
<div style="left:57.60px;top:164.70px;width:232.40px;height:0.90px;background:#cfd1d6;"></div>
<div style="left:57.60px;top:156.00px;width:0.90px;height:17.60px;background:#d4d6dc;"></div>
<div style="left:86.00px;top:156.40px;width:0.90px;height:1.60px;background:#333;"></div>
<div style="left:79.42px;top:160.60px;width:13.96px;height:8.00px;background:#f8f9fe;"></div>
<span class="t " style="left:80.62px;top:158.50px;font-size:8.0px;color:#222;">-54</span>
<div style="left:114.00px;top:156.40px;width:0.90px;height:1.60px;background:#333;"></div>
<div style="left:107.42px;top:160.60px;width:13.96px;height:8.00px;background:#f8f9fe;"></div>
<span class="t " style="left:108.62px;top:158.50px;font-size:8.0px;color:#222;">-48</span>
<div style="left:142.00px;top:156.40px;width:0.90px;height:1.60px;background:#333;"></div>
<div style="left:135.42px;top:160.60px;width:13.96px;height:8.00px;background:#f8f9fe;"></div>
<span class="t " style="left:136.62px;top:158.50px;font-size:8.0px;color:#222;">-42</span>
<div style="left:170.00px;top:156.40px;width:0.90px;height:1.60px;background:#333;"></div>
<div style="left:198.20px;top:156.40px;width:0.90px;height:1.60px;background:#333;"></div>
<div style="left:226.60px;top:156.40px;width:0.90px;height:1.60px;background:#333;"></div>
<div style="left:254.80px;top:156.40px;width:0.90px;height:1.60px;background:#333;"></div>
<div style="left:248.22px;top:160.60px;width:13.96px;height:8.00px;background:#f8f9fe;"></div>
<span class="t " style="left:249.42px;top:158.50px;font-size:8.0px;color:#222;">-18</span>
<div style="left:278.60px;top:156.40px;width:0.90px;height:1.60px;background:#333;"></div>
<div style="left:157.00px;top:160.60px;width:84.00px;height:8.00px;background:#f8f9fe;"></div>
<span class="t " style="left:159.00px;top:158.90px;font-size:7.6px;color:#222;letter-spacing:-0.067px;">Click to Start Monitoring</span>
<div style="left:470.00px;top:164.70px;width:197.00px;height:0.90px;background:#cfd1d6;"></div>
<div style="left:470.00px;top:156.00px;width:0.90px;height:17.60px;background:#d4d6dc;"></div>
<div style="left:496.10px;top:156.40px;width:0.90px;height:1.60px;background:#333;"></div>
<div style="left:489.52px;top:160.60px;width:13.96px;height:8.00px;background:#f8f9fe;"></div>
<span class="t " style="left:490.72px;top:158.50px;font-size:8.0px;color:#222;">-36</span>
<div style="left:524.00px;top:156.40px;width:0.90px;height:1.60px;background:#333;"></div>
<div style="left:517.42px;top:160.60px;width:13.96px;height:8.00px;background:#f8f9fe;"></div>
<span class="t " style="left:518.62px;top:158.50px;font-size:8.0px;color:#222;">-30</span>
<div style="left:552.20px;top:156.40px;width:0.90px;height:1.60px;background:#333;"></div>
<div style="left:545.62px;top:160.60px;width:13.96px;height:8.00px;background:#f8f9fe;"></div>
<span class="t " style="left:546.82px;top:158.50px;font-size:8.0px;color:#222;">-24</span>
<div style="left:581.00px;top:156.40px;width:0.90px;height:1.60px;background:#333;"></div>
<div style="left:574.42px;top:160.60px;width:13.96px;height:8.00px;background:#f8f9fe;"></div>
<span class="t " style="left:575.62px;top:158.50px;font-size:8.0px;color:#222;">-18</span>
<div style="left:608.80px;top:156.40px;width:0.90px;height:1.60px;background:#333;"></div>
<div style="left:602.22px;top:160.60px;width:13.96px;height:8.00px;background:#f8f9fe;"></div>
<span class="t " style="left:603.42px;top:158.50px;font-size:8.0px;color:#222;">-12</span>
<div style="left:637.00px;top:156.40px;width:0.90px;height:1.60px;background:#333;"></div>
<div style="left:632.64px;top:160.60px;width:9.51px;height:8.00px;background:#f8f9fe;"></div>
<span class="t " style="left:633.84px;top:158.50px;font-size:8.0px;color:#222;">-6</span>
<div style="left:662.80px;top:156.40px;width:0.90px;height:1.60px;background:#333;"></div>
<div style="left:659.78px;top:160.60px;width:6.85px;height:8.00px;background:#f8f9fe;"></div>
<span class="t " style="left:660.98px;top:158.50px;font-size:8.0px;color:#222;">0</span>
<div style="left:668.60px;top:156.00px;width:1.00px;height:17.60px;background:#d0d3d8;"></div>
<div style="left:671.80px;top:155.00px;width:1.00px;height:19.00px;background:#d0d3d8;"></div>
<div style="left:673.60px;top:155.00px;width:1.00px;height:19.00px;background:#d0d3d8;"></div>
<div style="left:31.00px;top:175.60px;width:18.00px;height:17.40px;background:#e3ebfb;border:1px solid #eef2fc;border-right-color:#d4d9e6;border-bottom-color:#d4d9e6;"></div>
<svg style="left:0.00px;top:0.00px;" width="705" height="590" viewBox="0 0 705 590"><path d="M35.8 178.8 L45.6 184.1 L35.8 189.4Z" fill="#6ec06e" stroke="#3f9a3f" stroke-width="0.9" stroke-linejoin="round"/><path d="M54 180H56.6" stroke="#333" stroke-width="0.8"/><path d="M145 180H148M146.5 178.5V181.5" stroke="#333" stroke-width="0.8"/><path d="M53 187.4H150.4" stroke="#909090" stroke-width="1"/><path d="M53.9 185.2V187.4" stroke="#9a9a9a" stroke-width="0.8"/><path d="M60.7 185.2V187.4" stroke="#9a9a9a" stroke-width="0.8"/><path d="M67.5 185.2V187.4" stroke="#9a9a9a" stroke-width="0.8"/><path d="M74.4 185.2V187.4" stroke="#9a9a9a" stroke-width="0.8"/><path d="M81.2 185.2V187.4" stroke="#9a9a9a" stroke-width="0.8"/><path d="M88.0 185.2V187.4" stroke="#9a9a9a" stroke-width="0.8"/><path d="M94.8 185.2V187.4" stroke="#9a9a9a" stroke-width="0.8"/><path d="M101.6 185.2V187.4" stroke="#9a9a9a" stroke-width="0.8"/><path d="M108.5 185.2V187.4" stroke="#9a9a9a" stroke-width="0.8"/><path d="M115.3 185.2V187.4" stroke="#9a9a9a" stroke-width="0.8"/><path d="M122.1 185.2V187.4" stroke="#9a9a9a" stroke-width="0.8"/><path d="M128.9 185.2V187.4" stroke="#9a9a9a" stroke-width="0.8"/><path d="M135.7 185.2V187.4" stroke="#9a9a9a" stroke-width="0.8"/><path d="M142.6 185.2V187.4" stroke="#9a9a9a" stroke-width="0.8"/><path d="M149.4 185.2V187.4" stroke="#9a9a9a" stroke-width="0.8"/><circle cx="85.6" cy="187" r="2.5" fill="#aab4f6" stroke="#3640e6" stroke-width="1.7"/></svg>
<div style="left:155.00px;top:174.80px;width:1.00px;height:19.00px;background:#d0d3d8;"></div>
<div style="left:157.00px;top:174.80px;width:1.00px;height:19.00px;background:#d0d3d8;"></div>
<div style="left:31.40px;top:196.00px;width:89.00px;height:15.60px;background:#e1e1e1;border:1px solid #adadad;"></div>
<span class="t " style="left:34.20px;top:198.00px;font-size:8.8px;color:#222;letter-spacing:-0.344px;">MME</span>
<svg style="left:111.20px;top:202.00px;" width="6" height="4" viewBox="0 0 6 4"><path d="M0.6 0.7 L3 3.1 L5.4 0.7" fill="none" stroke="#444" stroke-width="0.8"/></svg>
<div style="left:140.00px;top:196.00px;width:338.00px;height:15.60px;background:#e1e1e1;border:1px solid #adadad;"></div>
<span class="t " style="left:143.00px;top:198.00px;font-size:8.8px;color:#222;letter-spacing:-0.151px;">Microphone (Realtek High Defini</span>
<div style="left:430.00px;top:196.00px;width:212.60px;height:15.60px;background:#e1e1e1;border:1px solid #adadad;"></div>
<span class="t " style="left:465.89px;top:198.00px;font-size:8.8px;color:#222;letter-spacing:-0.315px;">Speakers (Realtek High Definiti</span>
<svg style="left:633.40px;top:202.00px;" width="6" height="4" viewBox="0 0 6 4"><path d="M0.6 0.7 L3 3.1 L5.4 0.7" fill="none" stroke="#444" stroke-width="0.8"/></svg>
<div style="left:644.20px;top:194.80px;width:1.00px;height:19.00px;background:#d0d3d8;"></div>
<div style="left:646.20px;top:194.80px;width:1.00px;height:19.00px;background:#d0d3d8;"></div>
<div style="left:21.90px;top:214.50px;width:652.80px;height:19.50px;background:#f8f9fe;"></div>
<div style="left:115.60px;top:214.50px;width:533.40px;height:19.50px;background:#c6c6c8;"></div>
<div style="left:30.40px;top:215.00px;width:19.20px;height:18.60px;background:#e6edfc;border:1px solid #eef2fc;border-right-color:#d0d6e4;border-bottom-color:#d0d6e4;"></div>
<svg style="left:34.00px;top:217.00px;" width="14" height="12" viewBox="0 0 14 12"><path d="M1.4 2 H12 L6.7 10.2Z" fill="#64c864" stroke="#46a046" stroke-width="0.9" stroke-linejoin="round"/></svg>
<svg style="left:0.00px;top:0.00px;" width="705" height="590" viewBox="0 0 705 590"><path d="M52.8 231.6V234" stroke="#222" stroke-width="0.9"/><path d="M84.6 231.6V234" stroke="#222" stroke-width="0.9"/><path d="M116.4 230V234" stroke="#222" stroke-width="1"/><path d="M148.2 231.6V234" stroke="#222" stroke-width="0.9"/><path d="M180.0 231.6V234" stroke="#222" stroke-width="0.9"/><path d="M211.8 230V234" stroke="#222" stroke-width="1"/><path d="M243.6 231.6V234" stroke="#222" stroke-width="0.9"/><path d="M275.4 231.6V234" stroke="#222" stroke-width="0.9"/><path d="M307.2 230V234" stroke="#222" stroke-width="1"/><path d="M339.0 231.6V234" stroke="#222" stroke-width="0.9"/><path d="M370.8 231.6V234" stroke="#222" stroke-width="0.9"/><path d="M402.6 230V234" stroke="#222" stroke-width="1"/><path d="M434.4 231.6V234" stroke="#222" stroke-width="0.9"/><path d="M466.2 231.6V234" stroke="#222" stroke-width="0.9"/><path d="M498.0 230V234" stroke="#222" stroke-width="1"/><path d="M529.8 231.6V234" stroke="#222" stroke-width="0.9"/><path d="M561.6 231.6V234" stroke="#222" stroke-width="0.9"/><path d="M593.4 230V234" stroke="#222" stroke-width="1"/><path d="M625.2 231.6V234" stroke="#222" stroke-width="0.9"/><path d="M657.0 231.6V234" stroke="#222" stroke-width="0.9"/></svg>
<span class="t " style="left:114.01px;top:218.40px;font-size:8.6px;color:#111;font-weight:bold;">0</span>
<span class="t " style="left:207.02px;top:218.40px;font-size:8.6px;color:#111;font-weight:bold;">15</span>
<span class="t " style="left:488.89px;top:218.40px;font-size:8.6px;color:#111;font-weight:bold;">1:00</span>
<span class="t " style="left:583.49px;top:218.40px;font-size:8.6px;color:#111;font-weight:bold;">1:15</span>
<div style="left:21.90px;top:233.90px;width:652.80px;height:1.30px;background:#2e2e2e;"></div>
<div style="left:21.90px;top:235.20px;width:641.30px;height:273.80px;background:#636584;"></div>
<div style="left:23.00px;top:236.20px;width:639.30px;height:106.50px;background:#1c1c1c;border:2.1px solid #d8d270;"></div>
<div style="left:25.90px;top:239.00px;width:633.10px;height:100.20px;background:#d4d5d6;"></div>
<div style="left:25.90px;top:239.00px;width:67.20px;height:100.20px;background:#dce7fc;"></div>
<div style="left:25.90px;top:239.00px;width:67.20px;height:24.60px;background:#cdd8f1;"></div>
<div style="left:25.90px;top:239.00px;width:11.90px;height:11.80px;background:#cdd8f1;border:1px solid #eef3fd;border-right-color:#8d93a3;border-bottom-color:#8d93a3;"></div>
<div style="left:37.80px;top:239.00px;width:55.30px;height:11.80px;background:#cdd8f1;border:1px solid #eef3fd;border-right-color:#8d93a3;border-bottom-color:#8d93a3;"></div>
<svg style="left:28.60px;top:241.60px;" width="8" height="8" viewBox="0 0 8 8"><path d="M1.2 1.2 L6.4 6.4 M6.4 1.2 L1.2 6.4" stroke="#000" stroke-width="1.05"/></svg>
<span class="t " style="left:40.60px;top:239.00px;font-size:8.4px;color:#222;letter-spacing:-0.572px;">02</span>
<svg style="left:83.60px;top:243.00px;" width="8" height="5" viewBox="0 0 8 5"><path d="M0.4 0.4 H7.6 L4 4.4Z" fill="#000"/></svg>
<div style="left:25.90px;top:251.40px;width:32.90px;height:11.80px;background:#cdd8f1;border:1px solid #eef3fd;border-right-color:#8d93a3;border-bottom-color:#8d93a3;"></div>
<div style="left:59.60px;top:251.40px;width:33.50px;height:11.80px;background:#cdd8f1;border:1px solid #eef3fd;border-right-color:#8d93a3;border-bottom-color:#8d93a3;"></div>
<span class="t " style="left:34.20px;top:251.50px;font-size:7.8px;color:#222;letter-spacing:-0.335px;">Mute</span>
<span class="t " style="left:68.80px;top:251.50px;font-size:7.8px;color:#222;letter-spacing:-0.303px;">Solo</span>
<div style="left:25.90px;top:263.40px;width:67.20px;height:0.80px;background:#8d93a3;"></div>
<div style="left:92.40px;top:239.00px;width:0.90px;height:100.20px;background:#8d93a3;"></div>
<svg style="left:0.00px;top:0.00px;" width="705" height="590" viewBox="0 0 705 590"><path d="M33 276H87" stroke="#a2a6ae" stroke-width="1"/><path d="M33.3 274V276" stroke="#a6aab2" stroke-width="0.8"/><path d="M38.7 274V276" stroke="#a6aab2" stroke-width="0.8"/><path d="M44.0 274V276" stroke="#a6aab2" stroke-width="0.8"/><path d="M49.4 274V276" stroke="#a6aab2" stroke-width="0.8"/><path d="M54.8 274V276" stroke="#a6aab2" stroke-width="0.8"/><path d="M60.1 274V276" stroke="#a6aab2" stroke-width="0.8"/><path d="M65.5 274V276" stroke="#a6aab2" stroke-width="0.8"/><path d="M70.9 274V276" stroke="#a6aab2" stroke-width="0.8"/><path d="M76.3 274V276" stroke="#a6aab2" stroke-width="0.8"/><path d="M81.6 274V276" stroke="#a6aab2" stroke-width="0.8"/><path d="M87.0 274V276" stroke="#a6aab2" stroke-width="0.8"/><circle cx="59.4" cy="275.9" r="2.5" fill="#aab4f6" stroke="#3640e6" stroke-width="1.7"/><path d="M33 297.4H87" stroke="#a2a6ae" stroke-width="1"/><path d="M33.3 295.4V297.4" stroke="#a6aab2" stroke-width="0.8"/><path d="M38.7 295.4V297.4" stroke="#a6aab2" stroke-width="0.8"/><path d="M44.0 295.4V297.4" stroke="#a6aab2" stroke-width="0.8"/><path d="M49.4 295.4V297.4" stroke="#a6aab2" stroke-width="0.8"/><path d="M54.8 295.4V297.4" stroke="#a6aab2" stroke-width="0.8"/><path d="M60.1 295.4V297.4" stroke="#a6aab2" stroke-width="0.8"/><path d="M65.5 295.4V297.4" stroke="#a6aab2" stroke-width="0.8"/><path d="M70.9 295.4V297.4" stroke="#a6aab2" stroke-width="0.8"/><path d="M76.3 295.4V297.4" stroke="#a6aab2" stroke-width="0.8"/><path d="M81.6 295.4V297.4" stroke="#a6aab2" stroke-width="0.8"/><path d="M87.0 295.4V297.4" stroke="#a6aab2" stroke-width="0.8"/><circle cx="59.4" cy="297.29999999999995" r="2.5" fill="#aab4f6" stroke="#3640e6" stroke-width="1.7"/><path d="M33.2 269.4H36" stroke="#222" stroke-width="0.8"/><path d="M81.6 269.4H84.6M83.1 267.9V270.9" stroke="#222" stroke-width="0.8"/></svg>
<span class="t " style="left:33.20px;top:283.50px;font-size:6.8px;color:#222;font-weight:bold;">L</span>
<span class="t " style="left:80.20px;top:283.50px;font-size:6.8px;color:#222;font-weight:bold;">R</span>
<span class="t " style="left:27.80px;top:306.30px;font-size:7.5px;color:#222;letter-spacing:-0.027px;">Mono, 44100Hz</span>
<span class="t " style="left:27.80px;top:314.80px;font-size:7.5px;color:#222;letter-spacing:0.082px;">32-bit float</span>
<div style="left:25.90px;top:327.60px;width:11.90px;height:11.60px;background:#cdd8f1;border:1px solid #eef3fd;border-right-color:#8d93a3;border-bottom-color:#8d93a3;"></div>
<div style="left:37.80px;top:327.60px;width:41.80px;height:11.60px;background:#cdd8f1;border:1px solid #eef3fd;border-right-color:#8d93a3;border-bottom-color:#8d93a3;"></div>
<svg style="left:28.00px;top:331.00px;" width="8" height="5" viewBox="0 0 8 5"><path d="M0.4 4.4 H7.6 L4 0.4Z" fill="#000"/></svg>
<span class="t " style="left:49.60px;top:327.50px;font-size:7.8px;color:#222;letter-spacing:-0.047px;">Select</span>
<div style="left:93.30px;top:239.00px;width:22.30px;height:100.20px;background:#d9e5fd;"></div>
<span class="t " style="left:99.99px;top:251.00px;font-size:9.0px;color:#111;font-weight:bold;letter-spacing:-0.433px;">1.0</span>
<span class="t " style="left:100.19px;top:267.60px;font-size:9.0px;color:#111;letter-spacing:-0.433px;">0.5</span>
<span class="t " style="left:99.99px;top:289.30px;font-size:9.0px;color:#111;font-weight:bold;letter-spacing:-0.433px;">0.0</span>
<span class="t " style="left:97.19px;top:311.40px;font-size:9.0px;color:#111;letter-spacing:-0.325px;">-0.5</span>
<span class="t " style="left:96.99px;top:328.20px;font-size:9.0px;color:#111;font-weight:bold;letter-spacing:-0.325px;">-1.0</span>
<div style="left:112.20px;top:273.30px;width:3.00px;height:0.90px;background:#222;"></div>
<div style="left:112.20px;top:295.00px;width:3.00px;height:0.90px;background:#222;"></div>
<div style="left:112.20px;top:316.80px;width:3.00px;height:0.90px;background:#222;"></div>
<div style="left:115.60px;top:239.00px;width:533.00px;height:100.20px;background:#eaf2fe;border:1px solid #1a1a1a;border-right-color:#777;border-bottom:none;border-radius:4.5px 4.5px 0 0;overflow:hidden;"><div style="left:0;top:0;width:100%;height:11.4px;background:#dcdcde;"></div></div>
<span class="t " style="left:119.60px;top:239.40px;font-size:8.4px;color:#222;letter-spacing:-0.572px;">02</span>
<svg style="left:0.00px;top:0.00px;" width="705" height="590" viewBox="0 0 705 590"><path d="M116.6 295.3H647.6" stroke="#3c3cd2" stroke-width="0.9"/><path d="M117.5 284.6V306.9M118.5 290.3V299.6M119.5 290.5V301.6M120.5 290.0V302.1M121.5 289.5V303.3M122.5 289.4V301.3M123.5 290.4V301.7M124.5 290.9V300.5M125.5 289.8V302.1M126.5 289.5V302.9M127.5 282.1V303.7M128.5 288.0V301.2M129.5 281.4V305.5M130.5 290.3V301.1M131.5 283.4V303.8M132.5 284.4V304.7M133.5 281.6V307.4M134.5 284.8V304.7M135.5 286.2V301.9M136.5 289.4V304.5M137.5 289.7V299.8M138.5 291.8V297.7M139.5 291.7V297.9M144.5 287.5V299.9M145.5 286.7V305.0M146.5 286.9V301.2M147.5 283.6V303.6M148.5 288.3V301.1M149.5 290.0V302.9M150.5 288.8V302.5M151.5 287.6V299.8M152.5 287.5V304.1M153.5 283.2V305.9M154.5 285.1V303.6M155.5 287.6V302.3M156.5 290.2V302.0M157.5 287.5V303.1M158.5 281.2V306.7M159.5 284.0V303.4M160.5 291.1V301.0M161.5 287.5V302.6M162.5 289.2V304.9M163.5 286.4V305.1M164.5 290.1V302.3M165.5 287.7V305.4M166.5 291.3V302.2M167.5 289.9V299.4M168.5 286.4V304.6M169.5 282.9V303.7M170.5 290.9V305.0M171.5 288.0V303.0M172.5 280.5V302.1M173.5 284.3V307.3M174.5 280.5V305.9M175.5 290.8V301.9M176.5 291.4V305.2M177.5 285.9V304.0M178.5 284.9V303.4M179.5 288.5V304.2M180.5 285.4V303.2M181.5 286.9V303.0M182.5 280.5V306.6M183.5 283.2V305.9M184.5 288.2V302.3M185.5 290.3V301.2M186.5 290.9V299.7M187.5 291.1V299.1M188.5 293.4V298.2M193.5 285.3V301.9M194.5 288.8V303.3M195.5 282.5V306.9M196.5 289.3V301.5M197.5 284.2V304.2M198.5 289.5V300.5M199.5 290.2V303.2M200.5 284.5V304.3M201.5 288.8V303.6M202.5 287.0V305.2M203.5 288.2V304.1M204.5 287.9V305.6M205.5 290.9V299.6M206.5 287.4V301.1M207.5 286.7V306.3M208.5 283.5V305.2M209.5 281.7V308.8M210.5 282.5V307.6M211.5 286.8V304.8M212.5 280.5V308.3M213.5 289.5V303.8M214.5 288.6V303.0M215.5 285.9V302.8M216.5 292.1V300.4M217.5 293.0V299.4M218.5 292.4V298.4M219.5 293.9V297.2M222.5 291.9V299.8M223.5 289.5V298.8M224.5 284.3V301.5M225.5 285.4V306.7M226.5 285.8V305.1M227.5 288.6V303.6M228.5 291.1V304.6M229.5 286.9V304.4M230.5 290.0V301.3M231.5 287.9V302.2M232.5 291.3V303.2M233.5 288.6V302.0M234.5 283.5V305.4M235.5 290.7V300.7M236.5 282.9V305.8M237.5 285.2V305.9M238.5 285.0V305.3M239.5 282.4V307.8M240.5 288.0V303.2M241.5 287.6V302.7M242.5 290.8V300.2M243.5 291.9V300.0M244.5 293.1V298.7M250.5 285.5V305.8M251.5 291.5V302.5M252.5 287.4V302.7M253.5 282.8V304.0M254.5 286.7V304.4M255.5 291.3V301.4M256.5 285.4V303.1M257.5 286.6V300.8M258.5 286.1V301.7M259.5 289.7V303.8M260.5 290.4V304.0M261.5 287.9V304.4M262.5 286.1V307.0M263.5 286.7V301.3M264.5 285.2V306.2M265.5 288.4V302.2M266.5 286.4V303.1M267.5 288.0V301.9M268.5 290.6V300.0M269.5 290.4V300.6M270.5 290.2V301.7M271.5 281.2V307.0M272.5 283.8V301.9M273.5 288.6V303.5M274.5 291.8V298.8M275.5 291.4V300.0M276.5 291.8V300.0M277.5 291.9V298.9M278.5 293.6V297.4M281.5 287.3V300.4M282.5 288.1V302.6M283.5 291.2V299.0M284.5 282.9V304.5M285.5 290.5V301.8M286.5 291.3V302.5M287.5 291.6V304.0M288.5 283.3V303.7M289.5 283.8V301.9M290.5 287.1V302.6M291.5 288.7V302.5M292.5 286.3V303.0M293.5 287.9V302.4M294.5 285.5V303.2M295.5 286.3V300.0M296.5 289.6V301.9M297.5 291.2V300.3M298.5 291.0V303.5M299.5 287.2V301.8M300.5 283.3V304.0M301.5 287.5V305.6M302.5 290.8V302.1M303.5 284.2V308.0M304.5 286.7V304.7M305.5 288.5V301.9M306.5 288.5V302.2M307.5 288.9V301.0M308.5 285.8V302.1M309.5 287.9V300.3M310.5 286.2V302.1M311.5 288.0V304.6M312.5 287.9V302.9M313.5 286.9V301.8M314.5 289.7V299.8M315.5 288.7V298.8M316.5 291.8V300.7M317.5 291.8V298.9M318.5 294.2V297.8M322.5 289.3V302.2M323.5 289.1V300.6M324.5 289.8V302.8M325.5 286.8V301.8M326.5 288.8V300.5M327.5 283.7V306.4M328.5 288.6V300.5M329.5 289.8V303.9M330.5 287.9V302.6M331.5 285.6V303.4M332.5 283.6V305.7M333.5 286.9V300.5M334.5 289.8V301.0M335.5 288.6V303.2M336.5 284.6V302.2M337.5 283.4V304.4M338.5 290.6V299.7M339.5 285.1V304.7M340.5 286.6V303.7M341.5 284.9V302.7M342.5 288.6V305.6M343.5 284.8V305.1M344.5 284.8V305.5M345.5 290.2V300.1M346.5 280.5V306.2M347.5 282.4V306.3M348.5 285.2V305.5M349.5 287.0V299.2M350.5 286.6V302.7M351.5 291.9V298.4M352.5 294.1V296.9M356.5 290.1V301.9M357.5 283.4V307.4M358.5 287.6V302.3M359.5 284.4V301.6M360.5 288.9V305.1M361.5 286.0V303.3M362.5 291.5V303.9M363.5 289.3V304.4M364.5 287.4V304.2M365.5 290.5V301.9M366.5 287.1V301.1M367.5 290.4V302.9M368.5 287.8V302.8M369.5 288.9V304.2M370.5 290.3V302.4M371.5 287.9V299.6M372.5 285.8V304.1M373.5 284.5V302.2M374.5 286.7V305.6M375.5 289.0V304.8M376.5 285.0V305.9M377.5 288.1V301.3M378.5 288.3V302.5M379.5 288.4V300.6M380.5 287.4V301.0M381.5 288.4V299.3M382.5 290.4V303.0M383.5 289.4V301.8M384.5 283.6V303.3M385.5 285.5V306.7M386.5 291.0V302.5M387.5 284.6V303.3M388.5 287.0V304.2M389.5 289.7V300.2M390.5 289.5V299.5M391.5 293.3V297.9M392.5 293.3V297.6M396.5 287.5V299.7M397.5 282.7V303.9M398.5 289.6V300.2M399.5 283.9V303.4M400.5 283.6V306.5M401.5 289.2V301.2M402.5 288.8V303.6M403.5 282.5V304.0M404.5 290.6V301.0M405.5 286.3V301.2M406.5 285.5V302.0M407.5 290.5V301.8M408.5 285.6V302.9M409.5 285.8V305.1M410.5 283.6V303.6M411.5 287.1V303.3M412.5 288.7V299.8M413.5 283.3V304.7M414.5 283.3V303.7M415.5 280.5V303.2M416.5 282.0V302.1M417.5 289.6V303.3M418.5 290.5V302.1M419.5 290.3V303.3M420.5 287.6V304.9M421.5 288.4V302.4M422.5 287.6V303.5M423.5 286.9V304.1M424.5 289.0V299.7M425.5 290.7V301.3M426.5 290.4V299.9M427.5 288.9V299.0M428.5 292.7V298.0M433.5 287.8V300.6M434.5 288.3V302.0M435.5 289.5V299.6M436.5 289.6V304.2M437.5 286.0V303.3M438.5 288.5V302.0M439.5 288.7V302.2M440.5 289.3V300.9M441.5 283.2V305.8M442.5 290.8V302.7M443.5 286.7V301.5M444.5 289.8V301.3M445.5 288.2V301.6M446.5 287.3V300.6M447.5 288.2V304.9M448.5 285.3V305.2M449.5 283.2V302.7M450.5 288.8V301.0M451.5 289.0V300.9M452.5 288.1V300.9M453.5 282.2V302.1M454.5 289.2V306.4M455.5 282.4V302.9M456.5 285.4V302.7M457.5 288.7V304.4M458.5 285.6V302.0M459.5 289.3V301.2M460.5 292.5V298.9M461.5 290.9V298.2M462.5 293.5V297.5M465.5 292.1V298.5M466.5 289.0V302.0M467.5 291.2V302.3M468.5 290.6V303.8M469.5 286.0V300.9M470.5 289.5V302.7M471.5 284.7V302.2M472.5 288.4V304.7M473.5 290.4V303.9M474.5 289.3V300.8M475.5 287.5V303.6M476.5 291.0V299.0M477.5 290.9V298.4M478.5 291.8V298.5M479.5 290.3V297.7M480.5 293.1V296.4M483.5 289.2V301.7M484.5 285.9V307.4M485.5 287.6V302.8M486.5 289.4V300.3M487.5 289.8V299.9M488.5 288.5V300.8M489.5 288.3V300.2M490.5 287.3V305.7M491.5 288.7V303.3M492.5 289.5V299.2M493.5 291.6V298.9M494.5 292.0V298.7M495.5 292.7V299.5M496.5 292.7V298.1M500.5 290.6V303.0M501.5 281.9V301.1M502.5 289.1V304.0M503.5 290.1V300.2M504.5 289.2V300.6M505.5 288.4V303.8M506.5 287.5V303.3M507.5 281.1V305.0M508.5 285.0V304.3M509.5 286.3V301.7M510.5 283.9V304.9M511.5 287.9V300.8M512.5 285.0V307.3M513.5 287.3V304.4M514.5 289.8V300.6M515.5 282.6V305.8M516.5 287.4V302.7M517.5 289.0V301.7M518.5 290.5V301.5M519.5 283.6V302.3M520.5 290.6V301.5M521.5 283.2V305.3M522.5 285.7V304.6M523.5 290.8V303.2M524.5 290.5V302.7M525.5 286.6V303.9M526.5 291.1V300.1M527.5 291.2V301.9M528.5 288.8V300.3M529.5 291.9V300.2M530.5 293.1V297.5M535.5 289.9V299.2M536.5 284.7V305.6M537.5 290.4V303.1M538.5 285.0V304.8M539.5 281.5V304.1M540.5 289.4V301.6M541.5 290.4V301.2M542.5 285.1V301.2M543.5 291.4V300.6M544.5 286.3V302.2M545.5 291.6V299.5M546.5 288.7V301.1M547.5 293.1V298.6M552.5 286.5V300.9M553.5 286.3V307.6M554.5 280.5V306.1M555.5 287.6V300.1M556.5 288.0V299.7M557.5 289.8V301.2M558.5 286.6V302.4M559.5 287.8V303.9M560.5 288.4V303.7M561.5 287.6V306.0M562.5 287.1V305.2M563.5 291.0V302.4M564.5 283.6V303.6M565.5 291.1V301.9M566.5 283.7V307.7M567.5 284.9V306.6M568.5 288.9V301.7M569.5 290.9V303.8M570.5 289.7V302.1M571.5 285.8V302.6M572.5 289.9V300.5M573.5 289.1V300.7M574.5 290.4V300.3M575.5 292.5V299.4M576.5 293.0V297.4M580.5 291.6V299.7M581.5 283.7V304.2M582.5 284.8V306.1M583.5 291.3V300.0M584.5 281.6V303.7M585.5 283.4V307.0M586.5 284.5V305.3M587.5 291.3V302.3M588.5 283.9V300.9M589.5 288.2V301.1M590.5 290.7V303.6M591.5 284.5V306.7M592.5 282.2V304.2M593.5 288.3V304.0M594.5 284.3V300.5M595.5 281.8V308.9M596.5 289.1V302.8M597.5 288.8V302.8M598.5 285.3V304.0M599.5 286.9V301.7M600.5 280.5V303.4M601.5 284.6V308.1M602.5 289.1V305.2M603.5 283.3V301.3M604.5 286.0V302.3M605.5 285.5V302.4M606.5 285.2V300.0M607.5 290.2V302.0M608.5 282.0V302.3M609.5 289.7V300.2M610.5 289.3V301.3M611.5 284.1V302.8M612.5 286.9V304.0M613.5 289.1V305.2M614.5 288.2V302.1M615.5 290.7V303.1M616.5 283.6V306.0M617.5 291.6V300.0M618.5 287.3V306.8M619.5 285.1V303.5M620.5 282.5V305.4M621.5 287.7V303.8M622.5 286.1V305.0M623.5 285.3V305.0M624.5 291.3V299.1M625.5 291.1V298.6M626.5 292.1V298.1M629.5 291.7V300.5M630.5 290.8V304.1M631.5 287.7V303.9M632.5 283.3V302.7M633.5 289.2V301.4M634.5 285.1V302.4M635.5 289.8V301.3M636.5 290.6V300.9M637.5 281.4V307.2M638.5 282.9V302.7M639.5 290.8V305.0M640.5 288.9V302.3M641.5 286.6V306.2M642.5 287.3V301.6M643.5 288.3V299.6M644.5 289.4V302.5M645.5 287.4V302.3M646.5 293.3V298.3" stroke="#3c3cd2" stroke-width="1.05"/><path d="M117.5 292.6V298.0M118.5 292.6V298.0M119.5 292.5V298.1M120.5 292.5V298.1M121.5 292.4V298.2M122.5 292.6V298.0M123.5 292.7V297.9M124.5 292.4V298.2M125.5 292.5V298.1M126.5 292.8V297.8M127.5 292.3V298.3M128.5 292.3V298.3M129.5 292.7V297.9M130.5 292.7V297.9M131.5 292.6V298.0M132.5 292.4V298.2M133.5 292.5V298.1M134.5 292.5V298.1M135.5 292.4V298.2M136.5 293.1V297.5M137.5 293.4V297.2M138.5 293.6V297.0M139.5 294.3V296.3M144.5 292.7V297.9M145.5 292.5V298.1M146.5 292.4V298.2M147.5 292.5V298.1M148.5 292.7V297.9M149.5 292.6V298.0M150.5 292.2V298.4M151.5 292.3V298.3M152.5 292.4V298.2M153.5 292.4V298.2M154.5 292.4V298.2M155.5 292.7V297.9M156.5 292.4V298.2M157.5 292.1V298.5M158.5 292.5V298.1M159.5 292.2V298.4M160.5 292.4V298.2M161.5 292.2V298.4M162.5 292.3V298.3M163.5 292.2V298.4M164.5 292.6V298.0M165.5 292.3V298.3M166.5 292.5V298.1M167.5 292.4V298.2M168.5 292.7V297.9M169.5 292.5V298.1M170.5 292.4V298.2M171.5 292.6V298.0M172.5 292.6V298.0M173.5 292.4V298.2M174.5 292.2V298.4M175.5 292.5V298.1M176.5 292.1V298.5M177.5 292.1V298.5M178.5 292.1V298.5M179.5 292.6V298.0M180.5 292.1V298.5M181.5 292.3V298.3M182.5 292.3V298.3M183.5 292.3V298.3M184.5 292.8V297.8M185.5 293.1V297.5M186.5 293.4V297.2M187.5 294.1V296.5M188.5 294.4V296.2M193.5 292.2V298.4M194.5 292.6V298.0M195.5 292.3V298.3M196.5 292.0V298.6M197.5 292.1V298.5M198.5 292.4V298.2M199.5 292.2V298.4M200.5 292.5V298.1M201.5 292.2V298.4M202.5 292.0V298.6M203.5 292.3V298.3M204.5 292.3V298.3M205.5 292.2V298.4M206.5 292.1V298.5M207.5 292.0V298.6M208.5 292.0V298.6M209.5 292.4V298.2M210.5 292.3V298.3M211.5 292.1V298.5M212.5 292.4V298.2M213.5 292.5V298.1M214.5 292.1V298.5M215.5 292.8V297.8M216.5 293.4V297.2M217.5 293.5V297.1M218.5 294.2V296.4M219.5 294.5V296.1M222.5 293.5V297.1M223.5 292.5V298.1M224.5 292.4V298.2M225.5 292.3V298.3M226.5 292.3V298.3M227.5 292.3V298.3M228.5 292.5V298.1M229.5 292.5V298.1M230.5 292.8V297.8M231.5 292.8V297.8M232.5 292.2V298.4M233.5 292.7V297.9M234.5 292.3V298.3M235.5 292.6V298.0M236.5 292.7V297.9M237.5 292.7V297.9M238.5 292.3V298.3M239.5 292.7V297.9M240.5 292.8V297.8M241.5 293.0V297.6M242.5 293.6V297.0M243.5 293.9V296.7M244.5 294.3V296.3M250.5 292.7V297.9M251.5 292.8V297.8M252.5 292.4V298.2M253.5 292.7V297.9M254.5 292.7V297.9M255.5 292.9V297.7M256.5 292.4V298.2M257.5 292.8V297.8M258.5 292.6V298.0M259.5 292.3V298.3M260.5 292.2V298.4M261.5 292.6V298.0M262.5 292.3V298.3M263.5 292.2V298.4M264.5 292.6V298.0M265.5 292.4V298.2M266.5 292.4V298.2M267.5 292.7V297.9M268.5 292.5V298.1M269.5 292.6V298.0M270.5 292.4V298.2M271.5 292.8V297.8M272.5 292.3V298.3M273.5 292.7V297.9M274.5 292.9V297.7M275.5 293.4V297.2M276.5 293.5V297.1M277.5 294.2V296.4M278.5 294.4V296.2M281.5 293.4V297.2M282.5 292.8V297.8M283.5 292.7V297.9M284.5 292.7V297.9M285.5 292.8V297.8M286.5 292.4V298.2M287.5 292.4V298.2M288.5 292.4V298.2M289.5 292.8V297.8M290.5 292.6V298.0M291.5 292.2V298.4M292.5 292.2V298.4M293.5 292.2V298.4M294.5 292.5V298.1M295.5 292.5V298.1M296.5 292.3V298.3M297.5 292.4V298.2M298.5 292.1V298.5M299.5 292.1V298.5M300.5 292.4V298.2M301.5 292.3V298.3M302.5 292.5V298.1M303.5 292.1V298.5M304.5 292.4V298.2M305.5 292.6V298.0M306.5 292.3V298.3M307.5 292.5V298.1M308.5 292.4V298.2M309.5 292.5V298.1M310.5 292.2V298.4M311.5 292.5V298.1M312.5 292.5V298.1M313.5 292.2V298.4M314.5 293.0V297.6M315.5 293.3V297.3M316.5 293.7V296.9M317.5 294.1V296.5M318.5 294.4V296.2M322.5 293.3V297.3M323.5 292.5V298.1M324.5 292.5V298.1M325.5 292.2V298.4M326.5 292.7V297.9M327.5 292.1V298.5M328.5 292.7V297.9M329.5 292.1V298.5M330.5 292.1V298.5M331.5 292.5V298.1M332.5 292.3V298.3M333.5 292.3V298.3M334.5 292.5V298.1M335.5 292.3V298.3M336.5 292.5V298.1M337.5 292.2V298.4M338.5 292.5V298.1M339.5 292.1V298.5M340.5 292.5V298.1M341.5 292.1V298.5M342.5 292.2V298.4M343.5 292.2V298.4M344.5 292.2V298.4M345.5 292.5V298.1M346.5 292.0V298.6M347.5 292.0V298.6M348.5 292.8V297.8M349.5 293.2V297.4M350.5 293.5V297.1M351.5 294.1V296.5M352.5 294.4V296.2M356.5 293.1V297.5M357.5 292.3V298.3M358.5 292.1V298.5M359.5 292.5V298.1M360.5 292.3V298.3M361.5 292.2V298.4M362.5 292.5V298.1M363.5 292.4V298.2M364.5 292.0V298.6M365.5 292.4V298.2M366.5 292.5V298.1M367.5 292.4V298.2M368.5 292.5V298.1M369.5 292.2V298.4M370.5 292.0V298.6M371.5 292.4V298.2M372.5 292.4V298.2M373.5 292.5V298.1M374.5 292.5V298.1M375.5 292.2V298.4M376.5 292.4V298.2M377.5 292.5V298.1M378.5 292.4V298.2M379.5 292.3V298.3M380.5 292.3V298.3M381.5 292.4V298.2M382.5 292.8V297.8M383.5 292.7V297.9M384.5 292.8V297.8M385.5 292.5V298.1M386.5 292.7V297.9M387.5 292.6V298.0M388.5 293.1V297.5M389.5 293.3V297.3M390.5 293.7V296.9M391.5 294.0V296.6M392.5 294.4V296.2M396.5 293.6V297.0M397.5 292.6V298.0M398.5 292.7V297.9M399.5 292.7V297.9M400.5 292.8V297.8M401.5 292.4V298.2M402.5 292.7V297.9M403.5 292.6V298.0M404.5 292.6V298.0M405.5 292.5V298.1M406.5 292.3V298.3M407.5 292.8V297.8M408.5 292.6V298.0M409.5 292.4V298.2M410.5 292.2V298.4M411.5 292.6V298.0M412.5 292.3V298.3M413.5 292.3V298.3M414.5 292.5V298.1M415.5 292.2V298.4M416.5 292.2V298.4M417.5 292.2V298.4M418.5 292.2V298.4M419.5 292.1V298.5M420.5 292.4V298.2M421.5 292.3V298.3M422.5 292.1V298.5M423.5 292.1V298.5M424.5 292.7V297.9M425.5 293.3V297.3M426.5 293.6V297.0M427.5 294.1V296.5M428.5 294.4V296.2M433.5 293.6V297.0M434.5 292.3V298.3M435.5 292.6V298.0M436.5 292.5V298.1M437.5 292.4V298.2M438.5 292.4V298.2M439.5 292.4V298.2M440.5 292.4V298.2M441.5 292.3V298.3M442.5 292.3V298.3M443.5 292.3V298.3M444.5 292.6V298.0M445.5 292.4V298.2M446.5 292.7V297.9M447.5 292.2V298.4M448.5 292.3V298.3M449.5 292.2V298.4M450.5 292.3V298.3M451.5 292.6V298.0M452.5 292.4V298.2M453.5 292.6V298.0M454.5 292.2V298.4M455.5 292.5V298.1M456.5 292.3V298.3M457.5 292.6V298.0M458.5 292.8V297.8M459.5 293.3V297.3M460.5 293.8V296.8M461.5 294.1V296.5M462.5 294.4V296.2M465.5 293.4V297.2M466.5 292.3V298.3M467.5 292.5V298.1M468.5 292.3V298.3M469.5 292.2V298.4M470.5 292.8V297.8M471.5 292.7V297.9M472.5 292.3V298.3M473.5 292.3V298.3M474.5 292.7V297.9M475.5 292.3V298.3M476.5 293.1V297.5M477.5 293.2V297.4M478.5 293.6V297.0M479.5 294.1V296.5M480.5 294.4V296.2M483.5 292.6V298.0M484.5 292.4V298.2M485.5 292.8V297.8M486.5 292.4V298.2M487.5 292.4V298.2M488.5 292.2V298.4M489.5 292.7V297.9M490.5 292.6V298.0M491.5 292.8V297.8M492.5 293.1V297.5M493.5 293.0V297.6M494.5 293.6V297.0M495.5 294.1V296.5M496.5 294.4V296.2M500.5 292.7V297.9M501.5 292.6V298.0M502.5 292.8V297.8M503.5 292.4V298.2M504.5 292.7V297.9M505.5 292.4V298.2M506.5 292.5V298.1M507.5 292.5V298.1M508.5 292.3V298.3M509.5 292.7V297.9M510.5 292.2V298.4M511.5 292.4V298.2M512.5 292.2V298.4M513.5 292.5V298.1M514.5 292.4V298.2M515.5 292.3V298.3M516.5 292.5V298.1M517.5 292.4V298.2M518.5 292.3V298.3M519.5 292.6V298.0M520.5 292.6V298.0M521.5 292.2V298.4M522.5 292.4V298.2M523.5 292.7V297.9M524.5 292.7V297.9M525.5 292.7V297.9M526.5 292.6V298.0M527.5 293.3V297.3M528.5 293.7V296.9M529.5 294.0V296.6M530.5 294.3V296.3M535.5 293.4V297.2M536.5 292.9V297.7M537.5 292.3V298.3M538.5 292.4V298.2M539.5 292.5V298.1M540.5 292.7V297.9M541.5 292.4V298.2M542.5 292.4V298.2M543.5 292.7V297.9M544.5 293.2V297.4M545.5 293.5V297.1M546.5 293.9V296.7M547.5 294.4V296.2M552.5 292.6V298.0M553.5 292.3V298.3M554.5 292.1V298.5M555.5 292.7V297.9M556.5 292.5V298.1M557.5 292.6V298.0M558.5 292.2V298.4M559.5 292.2V298.4M560.5 292.4V298.2M561.5 292.5V298.1M562.5 292.1V298.5M563.5 292.5V298.1M564.5 292.4V298.2M565.5 292.3V298.3M566.5 292.4V298.2M567.5 292.4V298.2M568.5 292.5V298.1M569.5 292.1V298.5M570.5 292.3V298.3M571.5 292.6V298.0M572.5 292.1V298.5M573.5 292.8V297.8M574.5 293.1V297.5M575.5 293.8V296.8M576.5 294.1V296.5M580.5 293.4V297.2M581.5 292.0V298.6M582.5 292.4V298.2M583.5 292.4V298.2M584.5 292.5V298.1M585.5 292.4V298.2M586.5 292.6V298.0M587.5 292.4V298.2M588.5 292.0V298.6M589.5 292.4V298.2M590.5 292.3V298.3M591.5 292.4V298.2M592.5 292.2V298.4M593.5 292.0V298.6M594.5 292.2V298.4M595.5 292.1V298.5M596.5 292.2V298.4M597.5 292.5V298.1M598.5 292.6V298.0M599.5 292.6V298.0M600.5 292.4V298.2M601.5 292.4V298.2M602.5 292.1V298.5M603.5 292.2V298.4M604.5 292.6V298.0M605.5 292.3V298.3M606.5 292.4V298.2M607.5 292.6V298.0M608.5 292.6V298.0M609.5 292.8V297.8M610.5 292.3V298.3M611.5 292.5V298.1M612.5 292.5V298.1M613.5 292.2V298.4M614.5 292.4V298.2M615.5 292.7V297.9M616.5 292.7V297.9M617.5 292.8V297.8M618.5 292.4V298.2M619.5 292.3V298.3M620.5 292.4V298.2M621.5 292.3V298.3M622.5 292.7V297.9M623.5 292.8V297.8M624.5 293.2V297.4M625.5 293.6V297.0M626.5 294.2V296.4M629.5 293.7V296.9M630.5 292.7V297.9M631.5 292.3V298.3M632.5 292.4V298.2M633.5 292.5V298.1M634.5 292.4V298.2M635.5 292.1V298.5M636.5 292.3V298.3M637.5 292.6V298.0M638.5 292.1V298.5M639.5 292.0V298.6M640.5 292.5V298.1M641.5 292.4V298.2M642.5 292.4V298.2M643.5 293.1V297.5M644.5 293.5V297.1M645.5 293.7V296.9M646.5 294.1V296.5" stroke="#6464e0" stroke-width="1.05"/></svg>
<div style="left:663.20px;top:235.20px;width:11.50px;height:273.80px;background:#f0f0f0;"></div>
<div style="left:663.60px;top:247.40px;width:11.10px;height:249.00px;background:#cdcdcd;"></div>
<svg style="left:665.60px;top:238.60px;" width="8" height="6" viewBox="0 0 8 6"><path d="M1 4.4 L3.8 1.6 L6.6 4.4" fill="none" stroke="#555" stroke-width="1.3"/></svg>
<svg style="left:665.60px;top:500.60px;" width="8" height="6" viewBox="0 0 8 6"><path d="M1 1.4 L3.8 4.2 L6.6 1.4" fill="none" stroke="#555" stroke-width="1.3"/></svg>
<div style="left:21.90px;top:509.00px;width:652.80px;height:12.00px;background:#f0f0f0;"></div>
<div style="left:130.40px;top:510.40px;width:423.00px;height:9.40px;background:#cdcdcd;"></div>
<svg style="left:120.60px;top:511.60px;" width="6" height="8" viewBox="0 0 6 8"><path d="M4.4 1 L1.6 3.8 L4.4 6.6" fill="none" stroke="#555" stroke-width="1.3"/></svg>
<svg style="left:654.60px;top:511.60px;" width="6" height="8" viewBox="0 0 6 8"><path d="M1.6 1 L4.4 3.8 L1.6 6.6" fill="none" stroke="#555" stroke-width="1.3"/></svg>
<div style="left:21.90px;top:521.00px;width:652.80px;height:40.40px;background:#f8f9fe;border-top:1px solid #d0d3d8;border-bottom:1px solid #d0d3d8;"></div>
<svg style="left:23.00px;top:0.00px;" width="7" height="590" viewBox="0 0 7 590"><path d="M1.8 524.0H5.2" stroke="#c2c4ca" stroke-width="0.7"/><path d="M1.8 526.9H5.2" stroke="#c2c4ca" stroke-width="0.7"/><path d="M1.8 529.7H5.2" stroke="#c2c4ca" stroke-width="0.7"/><path d="M1.8 532.5H5.2" stroke="#c2c4ca" stroke-width="0.7"/><path d="M1.8 535.4H5.2" stroke="#c2c4ca" stroke-width="0.7"/><path d="M1.8 538.2H5.2" stroke="#c2c4ca" stroke-width="0.7"/><path d="M1.8 541.1H5.2" stroke="#c2c4ca" stroke-width="0.7"/><path d="M1.8 544.0H5.2" stroke="#c2c4ca" stroke-width="0.7"/><path d="M1.8 546.8H5.2" stroke="#c2c4ca" stroke-width="0.7"/><path d="M1.8 549.6H5.2" stroke="#c2c4ca" stroke-width="0.7"/><path d="M1.8 552.5H5.2" stroke="#c2c4ca" stroke-width="0.7"/><path d="M1.8 555.4H5.2" stroke="#c2c4ca" stroke-width="0.7"/><path d="M1.8 558.2H5.2" stroke="#c2c4ca" stroke-width="0.7"/></svg>
<div style="left:29.70px;top:522.00px;width:1.00px;height:38.60px;background:#d0d3d8;"></div>
<span class="t " style="left:34.00px;top:525.60px;font-size:8.8px;color:#111;letter-spacing:-0.146px;">Project Rate (Hz)</span>
<span class="t " style="left:108.40px;top:525.60px;font-size:8.8px;color:#111;letter-spacing:-0.025px;">Snap-To</span>
<div style="left:34.00px;top:542.00px;width:65.00px;height:16.00px;background:#fff;border:1px solid #7a7a7a;"></div>
<span class="t " style="left:38.00px;top:544.20px;font-size:8.4px;color:#222;letter-spacing:-0.272px;">44100</span>
<svg style="left:89.80px;top:548.20px;" width="6" height="4" viewBox="0 0 6 4"><path d="M0.6 0.7 L3 3.1 L5.4 0.7" fill="none" stroke="#444" stroke-width="0.8"/></svg>
<div style="left:108.40px;top:542.00px;width:47.60px;height:16.00px;background:#e1e1e1;border:1px solid #adadad;"></div>
<span class="t " style="left:111.60px;top:544.20px;font-size:8.8px;color:#222;letter-spacing:0.008px;">Off</span>
<svg style="left:146.80px;top:548.20px;" width="6" height="4" viewBox="0 0 6 4"><path d="M0.6 0.7 L3 3.1 L5.4 0.7" fill="none" stroke="#444" stroke-width="0.8"/></svg>
<div style="left:103.40px;top:526.00px;width:1.00px;height:10.60px;background:#a8a8a8;"></div>
<div style="left:103.40px;top:545.60px;width:1.00px;height:10.60px;background:#a8a8a8;"></div>
<div style="left:160.60px;top:526.00px;width:1.00px;height:10.60px;background:#a8a8a8;"></div>
<div style="left:160.60px;top:545.60px;width:1.00px;height:10.60px;background:#a8a8a8;"></div>
<div style="left:165.40px;top:523.00px;width:254.60px;height:14.80px;background:#e1e1e1;border:1px solid #adadad;"></div>
<span class="t " style="left:168.40px;top:524.60px;font-size:8.6px;color:#222;letter-spacing:-0.205px;">Start and End of Selection</span>
<div style="left:165.40px;top:542.00px;width:110.00px;height:15.00px;background:#a9adbc;border:1px solid #9498a4;"></div>
<div style="left:167.20px;top:543.60px;width:16.00px;height:11.80px;background:#c9c9d0;"></div>
<div style="left:191.80px;top:543.60px;width:16.40px;height:11.80px;background:#c9c9d0;"></div>
<div style="left:219.80px;top:543.60px;width:41.40px;height:11.80px;background:#c9c9d0;"></div>
<span class="t " style="left:168.62px;top:546.00px;font-size:10.0px;color:#2c2cc8;text-rendering:geometricPrecision;">0</span>
<span class="t " style="left:176.22px;top:546.00px;font-size:10.0px;color:#2c2cc8;text-rendering:geometricPrecision;">0</span>
<span class="t " style="left:184.87px;top:546.00px;font-size:9.8px;color:#2c2cc8;text-rendering:geometricPrecision;">h</span>
<span class="t " style="left:193.22px;top:546.00px;font-size:10.0px;color:#2c2cc8;text-rendering:geometricPrecision;">0</span>
<span class="t " style="left:201.22px;top:546.00px;font-size:10.0px;color:#2c2cc8;text-rendering:geometricPrecision;">0</span>
<span class="t " style="left:209.92px;top:546.00px;font-size:9.8px;color:#2c2cc8;text-rendering:geometricPrecision;">m</span>
<span class="t " style="left:221.22px;top:546.00px;font-size:10.0px;color:#2c2cc8;text-rendering:geometricPrecision;">0</span>
<span class="t " style="left:228.82px;top:546.00px;font-size:10.0px;color:#2c2cc8;text-rendering:geometricPrecision;">0</span>
<span class="t " style="left:235.41px;top:546.00px;font-size:10.0px;color:#2c2cc8;text-rendering:geometricPrecision;">.</span>
<span class="t " style="left:239.22px;top:546.00px;font-size:10.0px;color:#2c2cc8;text-rendering:geometricPrecision;">0</span>
<span class="t " style="left:246.82px;top:546.00px;font-size:10.0px;color:#2c2cc8;text-rendering:geometricPrecision;">0</span>
<span class="t " style="left:254.22px;top:546.00px;font-size:10.0px;color:#2c2cc8;text-rendering:geometricPrecision;">0</span>
<span class="t " style="left:262.95px;top:546.00px;font-size:9.8px;color:#2c2cc8;text-rendering:geometricPrecision;">s</span>
<svg style="left:269.40px;top:547.60px;" width="6" height="4" viewBox="0 0 6 4"><path d="M0.3 0.3H5.3L2.8 3.2Z" fill="#000"/></svg>
<div style="left:440.00px;top:527.40px;width:121.60px;height:26.20px;background:#a9adbc;border:1px solid #9498a4;"></div>
<div style="left:510.20px;top:528.60px;width:29.10px;height:23.80px;background:#c9c9d0;"></div>
<span class="t " style="left:489.39px;top:536.20px;font-size:19px;color:#1c1cb6;">m</span>
<span class="t " style="left:512.62px;top:536.20px;font-size:19px;color:#1c1cb6;">0</span>
<span class="t " style="left:526.62px;top:536.20px;font-size:19px;color:#1c1cb6;">0</span>
<span class="t " style="left:544.45px;top:536.20px;font-size:19px;color:#1c1cb6;">s</span>
<div style="left:555.20px;top:528.40px;width:0.80px;height:24.20px;background:#c4c6ce;"></div>
<svg style="left:556.20px;top:541.00px;" width="6" height="4" viewBox="0 0 6 4"><path d="M0.3 0.3H5.3L2.8 3.2Z" fill="#000"/></svg>
<div style="left:568.80px;top:522.00px;width:1.00px;height:39.00px;background:#d0d3d8;"></div>
<div style="left:570.80px;top:522.00px;width:1.00px;height:39.00px;background:#d0d3d8;"></div>
<div style="left:21.90px;top:561.40px;width:652.80px;height:15.50px;background:#f0f0f0;"></div>
<div style="left:21.90px;top:561.40px;width:652.80px;height:1.00px;background:#dadada;"></div>
<div style="left:29.00px;top:563.00px;width:1.00px;height:13.00px;background:#d8d8d8;"></div>
<div style="left:149.40px;top:563.00px;width:1.00px;height:13.00px;background:#d8d8d8;"></div>
<div style="left:549.40px;top:563.00px;width:1.00px;height:13.00px;background:#d8d8d8;"></div>
<span class="t " style="left:32.00px;top:565.20px;font-size:8.4px;color:#222;letter-spacing:-0.154px;">Stopped.</span>
<svg style="left:665.00px;top:567.60px;" width="9" height="9" viewBox="0 0 9 9"><rect x="6" y="6" width="1" height="1" fill="#a8a8a8"/><rect x="4" y="6" width="1" height="1" fill="#a8a8a8"/><rect x="2" y="6" width="1" height="1" fill="#a8a8a8"/><rect x="6" y="4" width="1" height="1" fill="#a8a8a8"/><rect x="4" y="4" width="1" height="1" fill="#a8a8a8"/><rect x="6" y="2" width="1" height="1" fill="#a8a8a8"/></svg>
<div style="left:279.20px;top:5.40px;width:204.20px;height:600.00px;background:#f2f2f2;border:1px solid #cfcfcf;box-shadow:1.4px 1px 0 0 rgba(70,74,84,0.62),2px 2px 2.5px 0 rgba(0,0,0,0.25);"></div>
<svg style="left:293.80px;top:9.80px;" width="7" height="5" viewBox="0 0 7 5"><path d="M0.2 4.2 L3.2 0.6 L6.2 4.2Z" fill="#8e8e8e"/></svg>
<div style="left:301.50px;top:36.70px;width:180.00px;height:1.00px;background:#dcdcdc;"></div>
<div style="left:301.50px;top:37.70px;width:180.00px;height:0.80px;background:#fbfbfb;"></div>
<div style="left:301.50px;top:57.10px;width:180.00px;height:1.00px;background:#dcdcdc;"></div>
<div style="left:301.50px;top:58.10px;width:180.00px;height:0.80px;background:#fbfbfb;"></div>
<div style="left:301.50px;top:481.70px;width:180.00px;height:1.00px;background:#dcdcdc;"></div>
<div style="left:301.50px;top:482.70px;width:180.00px;height:0.80px;background:#fbfbfb;"></div>
<div style="left:281.20px;top:324.80px;width:200.40px;height:15.20px;background:#91c9f7;"></div>
<span class="t " style="left:303.90px;top:22.00px;font-size:9.8px;color:#111;transform:scaleX(0.8598);transform-origin:0 50%;text-rendering:geometricPrecision;">Add / Remove Plug-ins...</span>
<span class="t " style="left:303.90px;top:43.00px;font-size:9.8px;color:#111;transform:scaleX(0.8415);transform-origin:0 50%;text-rendering:geometricPrecision;">Repeat Normalize</span>
<span class="t " style="left:303.90px;top:63.00px;font-size:9.8px;color:#111;transform:scaleX(0.9174);transform-origin:0 50%;text-rendering:geometricPrecision;">Amplify...</span>
<span class="t " style="left:303.90px;top:79.00px;font-size:9.8px;color:#111;transform:scaleX(0.8618);transform-origin:0 50%;text-rendering:geometricPrecision;">Auto Duck...</span>
<span class="t " style="left:303.90px;top:94.00px;font-size:9.8px;color:#111;transform:scaleX(0.7976);transform-origin:0 50%;text-rendering:geometricPrecision;">Bass and Treble...</span>
<span class="t " style="left:303.90px;top:110.00px;font-size:9.8px;color:#111;transform:scaleX(0.8402);transform-origin:0 50%;text-rendering:geometricPrecision;">Change Pitch...</span>
<span class="t " style="left:303.90px;top:126.00px;font-size:9.8px;color:#111;transform:scaleX(0.8157);transform-origin:0 50%;text-rendering:geometricPrecision;">Change Speed...</span>
<span class="t " style="left:303.90px;top:141.00px;font-size:9.8px;color:#111;transform:scaleX(0.8461);transform-origin:0 50%;text-rendering:geometricPrecision;">Change Tempo...</span>
<span class="t " style="left:303.90px;top:157.00px;font-size:9.8px;color:#111;transform:scaleX(0.8377);transform-origin:0 50%;text-rendering:geometricPrecision;">Click Removal...</span>
<span class="t " style="left:303.90px;top:172.00px;font-size:9.8px;color:#111;transform:scaleX(0.8443);transform-origin:0 50%;text-rendering:geometricPrecision;">Compressor...</span>
<span class="t " style="left:303.90px;top:188.00px;font-size:9.8px;color:#111;transform:scaleX(0.8676);transform-origin:0 50%;text-rendering:geometricPrecision;">Distortion...</span>
<span class="t " style="left:303.90px;top:204.00px;font-size:9.8px;color:#111;transform:scaleX(0.8064);transform-origin:0 50%;text-rendering:geometricPrecision;">Echo...</span>
<span class="t " style="left:303.90px;top:219.00px;font-size:9.8px;color:#111;transform:scaleX(0.7974);transform-origin:0 50%;text-rendering:geometricPrecision;">Fade In</span>
<span class="t " style="left:303.90px;top:235.00px;font-size:9.8px;color:#111;transform:scaleX(0.8322);transform-origin:0 50%;text-rendering:geometricPrecision;">Fade Out</span>
<span class="t " style="left:303.90px;top:250.00px;font-size:9.8px;color:#111;transform:scaleX(0.8112);transform-origin:0 50%;text-rendering:geometricPrecision;">Filter Curve EQ...</span>
<span class="t " style="left:303.90px;top:266.00px;font-size:9.8px;color:#111;transform:scaleX(0.8086);transform-origin:0 50%;text-rendering:geometricPrecision;">Graphic EQ...</span>
<span class="t " style="left:303.90px;top:282.00px;font-size:9.8px;color:#111;transform:scaleX(0.8446);transform-origin:0 50%;text-rendering:geometricPrecision;">Invert</span>
<span class="t " style="left:303.90px;top:297.00px;font-size:9.8px;color:#111;transform:scaleX(0.8526);transform-origin:0 50%;text-rendering:geometricPrecision;">Loudness Normalization...</span>
<span class="t " style="left:303.90px;top:313.00px;font-size:9.8px;color:#111;transform:scaleX(0.8442);transform-origin:0 50%;text-rendering:geometricPrecision;">Noise Reduction...</span>
<span class="t " style="left:303.90px;top:328.00px;font-size:9.8px;color:#111;transform:scaleX(0.8493);transform-origin:0 50%;text-rendering:geometricPrecision;">Normalize...</span>
<span class="t " style="left:303.90px;top:344.00px;font-size:9.8px;color:#111;transform:scaleX(0.8358);transform-origin:0 50%;text-rendering:geometricPrecision;">Paulstretch...</span>
<span class="t " style="left:303.90px;top:359.00px;font-size:9.8px;color:#111;transform:scaleX(0.8066);transform-origin:0 50%;text-rendering:geometricPrecision;">Phaser...</span>
<span class="t " style="left:303.90px;top:375.00px;font-size:9.8px;color:#111;transform:scaleX(0.8105);transform-origin:0 50%;text-rendering:geometricPrecision;">Repair</span>
<span class="t " style="left:303.90px;top:391.00px;font-size:9.8px;color:#111;transform:scaleX(0.7921);transform-origin:0 50%;text-rendering:geometricPrecision;">Repeat...</span>
<span class="t " style="left:303.90px;top:406.00px;font-size:9.8px;color:#111;transform:scaleX(0.7998);transform-origin:0 50%;text-rendering:geometricPrecision;">Reverb...</span>
<span class="t " style="left:303.90px;top:422.00px;font-size:9.8px;color:#111;transform:scaleX(0.7810);transform-origin:0 50%;text-rendering:geometricPrecision;">Reverse</span>
<span class="t " style="left:303.90px;top:437.00px;font-size:9.8px;color:#111;transform:scaleX(0.8408);transform-origin:0 50%;text-rendering:geometricPrecision;">Sliding Stretch...</span>
<span class="t " style="left:303.90px;top:453.00px;font-size:9.8px;color:#111;transform:scaleX(0.8163);transform-origin:0 50%;text-rendering:geometricPrecision;">Truncate Silence...</span>
<span class="t " style="left:303.90px;top:469.00px;font-size:9.8px;color:#111;transform:scaleX(0.8425);transform-origin:0 50%;text-rendering:geometricPrecision;">Wahwah...</span>
<span class="t " style="left:303.90px;top:488.00px;font-size:9.8px;color:#111;transform:scaleX(0.8330);transform-origin:0 50%;text-rendering:geometricPrecision;">Adjustable Fade...</span>
<span class="t " style="left:303.90px;top:504.00px;font-size:9.8px;color:#111;transform:scaleX(0.8326);transform-origin:0 50%;text-rendering:geometricPrecision;">Clip Fix...</span>
<span class="t " style="left:303.90px;top:519.00px;font-size:9.8px;color:#111;transform:scaleX(0.8240);transform-origin:0 50%;text-rendering:geometricPrecision;">Crossfade Clips</span>
<span class="t " style="left:303.90px;top:535.00px;font-size:9.8px;color:#111;transform:scaleX(0.8032);transform-origin:0 50%;text-rendering:geometricPrecision;">Crossfade Tracks...</span>
<span class="t " style="left:303.90px;top:551.00px;font-size:9.8px;color:#111;transform:scaleX(0.8247);transform-origin:0 50%;text-rendering:geometricPrecision;">Delay...</span>
<span class="t " style="left:303.90px;top:566.00px;font-size:9.8px;color:#111;transform:scaleX(0.8431);transform-origin:0 50%;text-rendering:geometricPrecision;">High-Pass Filter...</span>
<span class="t " style="left:303.90px;top:582.00px;font-size:9.8px;color:#111;transform:scaleX(0.8695);transform-origin:0 50%;text-rendering:geometricPrecision;">Limiter...</span>
<span class="t " style="left:444.70px;top:43.00px;font-size:9.8px;color:#111;transform:scaleX(0.8701);transform-origin:0 50%;text-rendering:geometricPrecision;">Ctrl+R</span>
</div></body></html>
